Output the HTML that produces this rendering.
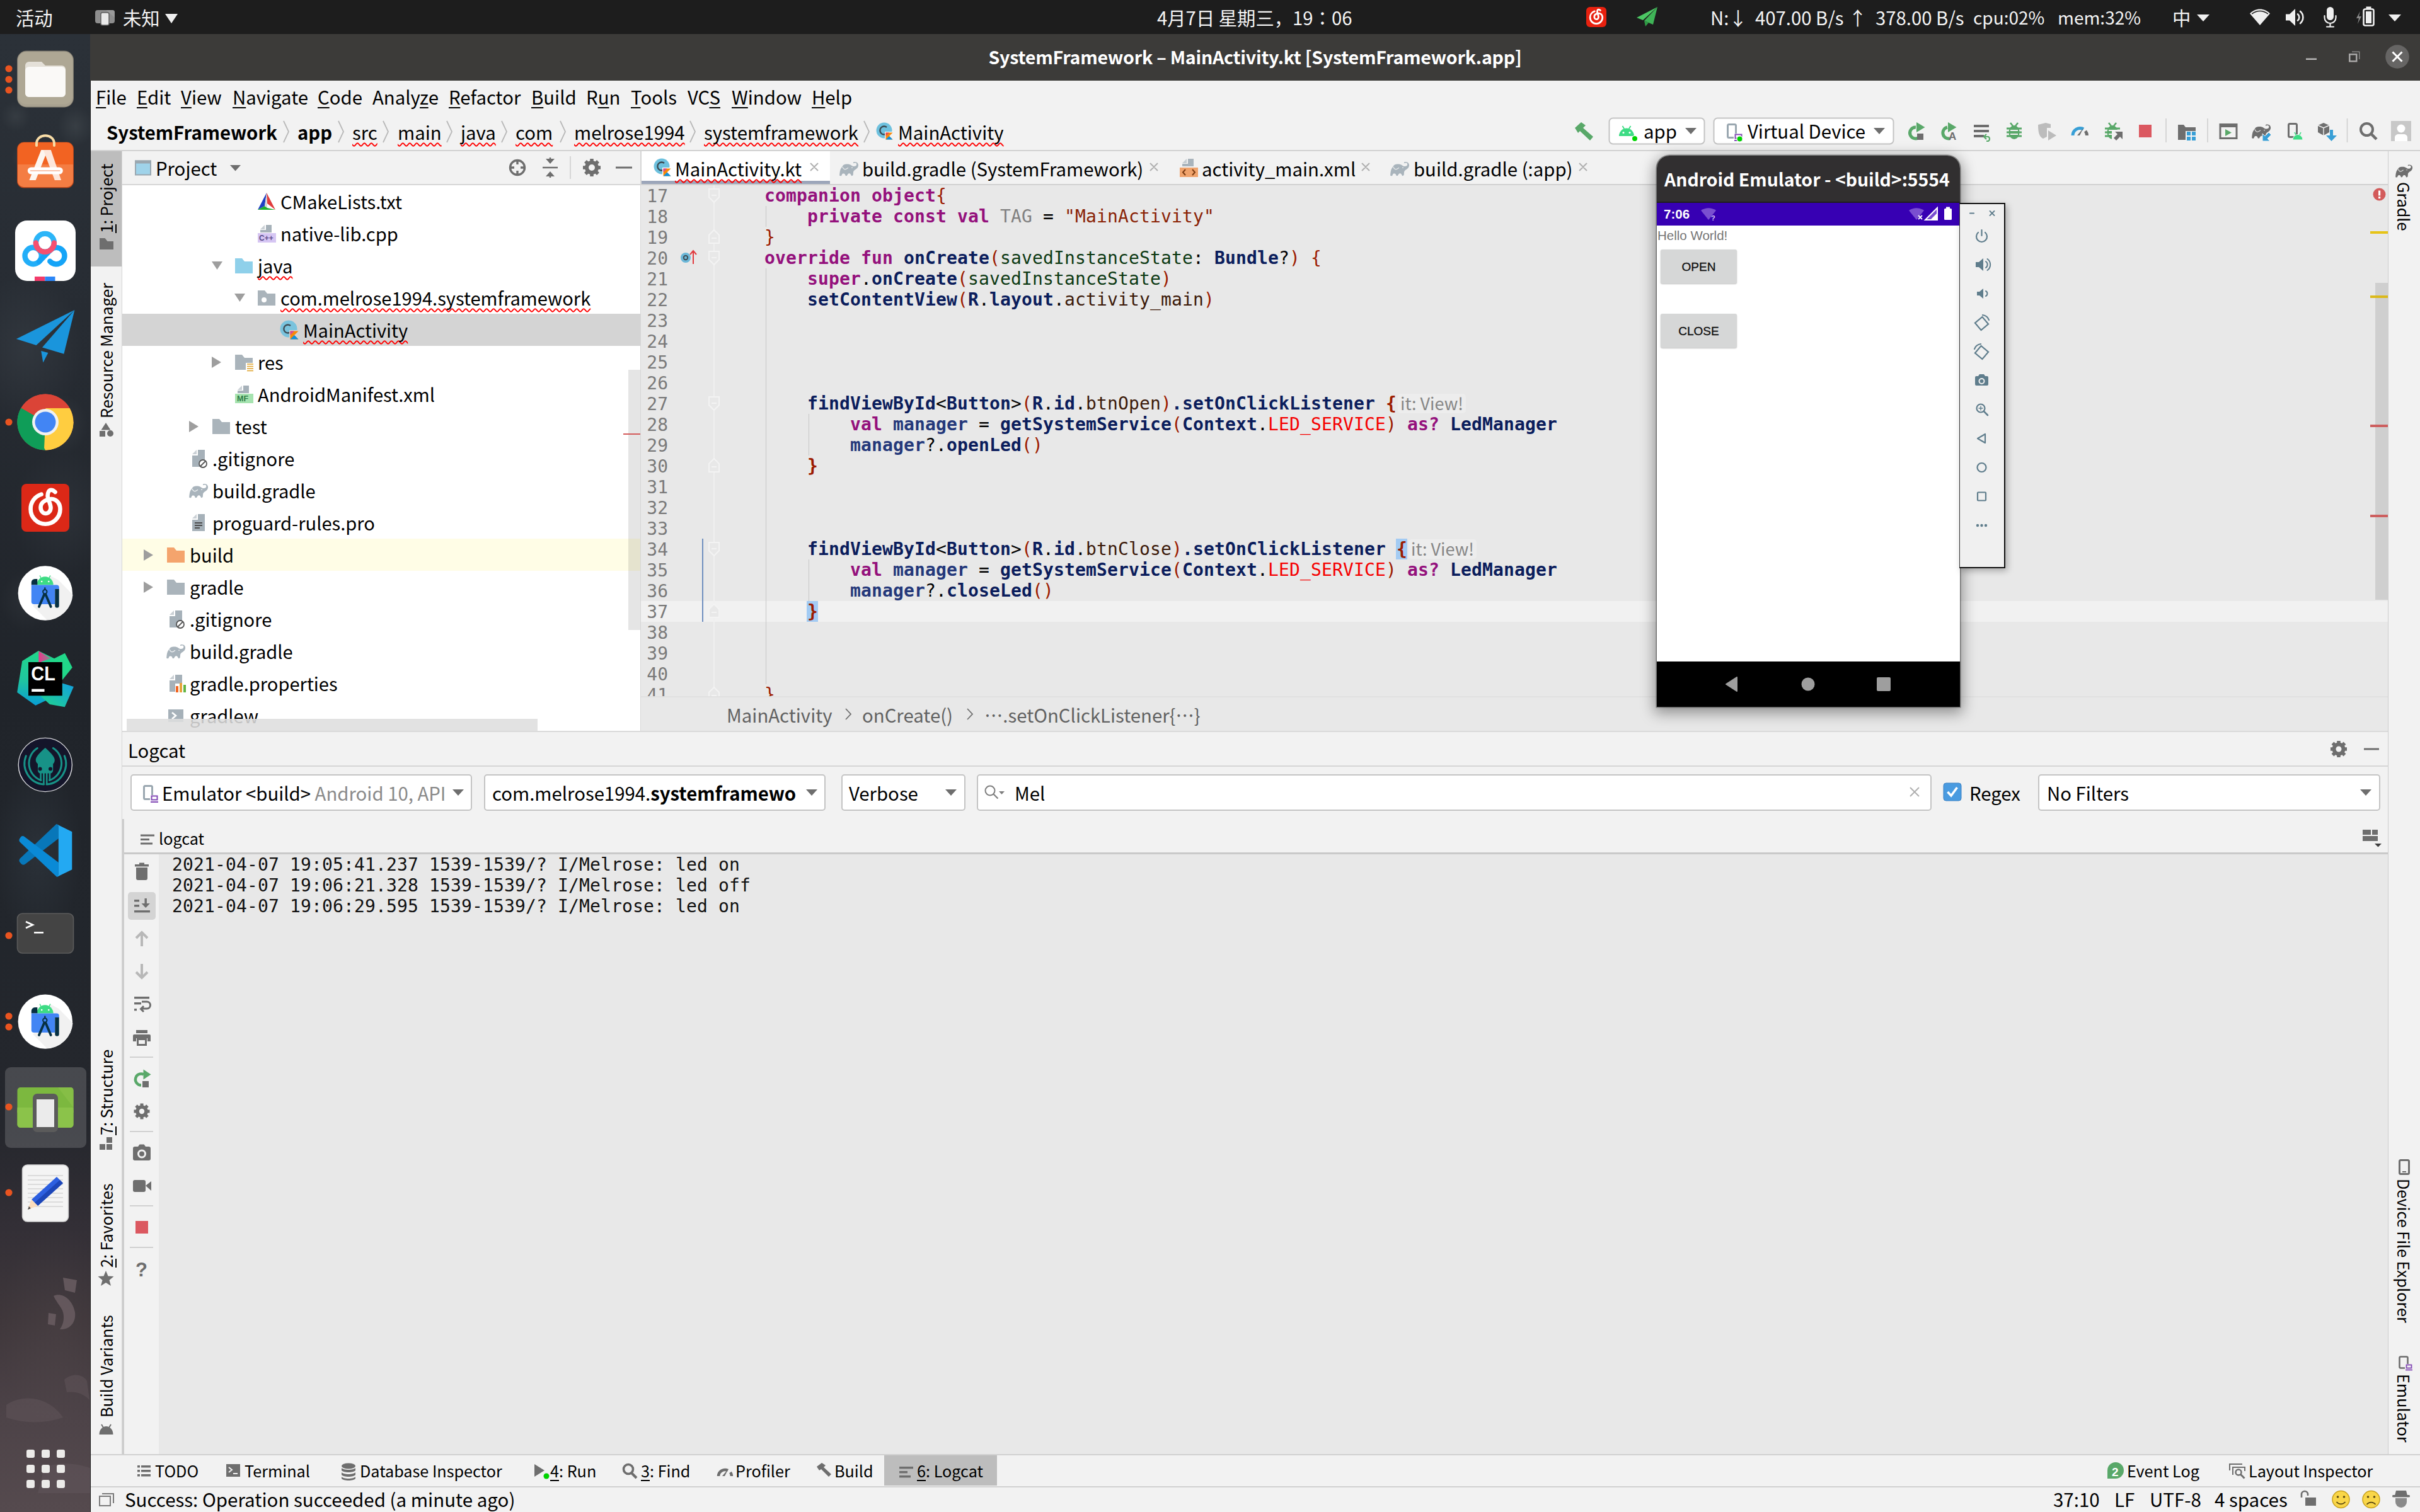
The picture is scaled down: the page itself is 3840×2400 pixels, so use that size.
<!DOCTYPE html>
<html lang="zh">
<head>
<meta charset="utf-8">
<title>SystemFramework – MainActivity.kt [SystemFramework.app]</title>
<style>
*{box-sizing:border-box;margin:0;padding:0}
html,body{width:3840px;height:2400px;overflow:hidden;background:#f2f2f2}
body{position:relative;font-family:"Noto Sans CJK SC","Liberation Sans",sans-serif;font-size:30px;color:#000;line-height:1}
.abs{position:absolute}
.nw{white-space:nowrap}
.ui{font-family:"Noto Sans CJK SC","Liberation Sans",sans-serif}
.mono{font-family:"DejaVu Sans Mono","Liberation Mono",monospace}
u.m{text-decoration:underline;text-decoration-thickness:2px;text-underline-offset:4px}
.sq{text-decoration:underline wavy #f00;text-decoration-thickness:1.500px;text-underline-offset:3.500px;text-decoration-skip-ink:none}
svg{position:absolute;overflow:visible}
/* top bar */
#topbar{left:0;top:0;width:3840px;height:54px;background:#1d1d1d;color:#f4f4f4;font-size:29.33px}
#topbar .t{position:absolute;top:0;height:54px;line-height:54px;white-space:nowrap}
/* dock */
#dock{left:0;top:54px;width:143px;height:2346px;background:linear-gradient(180deg,#2b3138 0%,#272c33 19%,#20242a 44.6%,#22262c 61.6%,#25272d 74%,#332f36 80.8%,#3f373b 87%,#4d4348 93.6%,#554a4e 100%)}
/* title */
#title{left:143px;top:54px;width:3697px;height:74px;background:#3c3b39}
#title .tt{position:absolute;left:0;width:3697px;top:0;height:74px;line-height:72px;text-align:center;color:#fff;font-weight:bold;font-size:28.6px;letter-spacing:-0.25px}
/* ide */
#ide{left:143px;top:128px;width:3697px;height:2272px;background:#f2f2f2}
.hl{position:absolute;background:#d1d1d1;height:2px}
.vl{position:absolute;background:#d1d1d1;width:2px}
.row{position:absolute;left:0;height:51px;line-height:49px;white-space:nowrap;font-size:30px}
.code{position:absolute;left:0;top:0;font-family:"DejaVu Sans Mono","Liberation Mono",monospace;font-size:28px;letter-spacing:0.143px;line-height:33px;white-space:pre}
.k{color:#94117c;font-weight:bold}
.f{color:#0b1d5c;font-weight:bold}
.b{color:#9c1b00}
.bb{color:#9c1b00;font-weight:bold}
.p{color:#0e3a14}
.s{color:#8a2306}
.g{color:#808080}
.v{color:#24387a;font-weight:bold}
.e{color:#f50000}
.n{color:#3c1a0a}
.hint{font-family:"Noto Sans CJK SC","Liberation Sans",sans-serif;font-size:27px;color:#868686;background:#ededed;border-radius:5px;letter-spacing:0;padding:0 4px;margin-left:4px}
.ln{position:absolute;left:0;width:70px;text-align:right;color:#7a7a7a;font-family:"DejaVu Sans Mono","Liberation Mono",monospace;font-size:28px;line-height:33px;height:33px}
.tab{position:absolute;top:0;height:52px;line-height:52px;white-space:nowrap;font-size:30px}

.vt{position:absolute;white-space:nowrap;font-size:25.2px;line-height:50px;height:50px;transform-origin:0 0}
.combo{position:absolute;background:#fff;border:2px solid #c4c4c4;border-radius:5px;white-space:nowrap;overflow:hidden}
.arr{position:absolute;width:0;height:0;border-left:9px solid transparent;border-right:9px solid transparent;border-top:10px solid #6e6e6e}
</style>
</head>
<body>
<div id="topbar" class="abs">
  <div class="t" style="left:25px">活动</div>
  <svg style="left:151px;top:16px" width="31" height="24" viewBox="0 0 31 24"><rect x="0" y="0" width="31" height="21" rx="4" fill="#8e8e8e"/><path d="M17 0h10a4 4 0 0 1 4 4v8z" fill="#9b9b9b"/><rect x="9" y="4" width="13" height="20" rx="2.5" fill="#e9e9e9" stroke="#5e5e5e" stroke-width="1.5"/></svg>
  <div class="t" style="left:195px">未知</div>
  <svg style="left:262px;top:22px" width="20" height="15" viewBox="0 0 20 15"><path d="M0 0h20L10 15z" fill="#f0f0f0"/></svg>
  <div class="t" lang="ja" style="left:1836px;font-family:'Noto Sans CJK JP','Noto Sans CJK SC',sans-serif">4月7日 星期三，19：06</div>
  <svg style="left:2517px;top:11px" width="32" height="32" viewBox="0 0 32 32"><rect width="32" height="32" rx="6" fill="#e8210f"/><path transform="scale(.418) translate(-33.900 -768)" d="M65.600 784.600A24 24 0 0 0 48.600 808.300A23.400 23.400 0 0 0 72 831.700A23.400 23.400 0 0 0 95.500 808.300C95.500 799 90 792.500 82 792C76 791.600 64.500 796 64.500 805C64.500 811 68 815 72.500 815C77 815 80.500 811 80.500 806C80.500 800 75.600 792 75.600 787C75.600 781 78 777.800 81 777.800C84 777.800 86 779.500 87.500 781.100" fill="none" stroke="#fff" stroke-width="6.600" stroke-linecap="round" stroke-linejoin="round"/></svg>
  <svg style="left:2597px;top:11px" width="33" height="31" viewBox="0 0 33 31"><path d="M33 0L0 17l10 4z" fill="#4cc764"/><path d="M33 0L12 22l14 6z" fill="#3fb457"/><path d="M12 22l2 9 5-6z" fill="#2f9a45"/></svg>
  <div class="t" style="left:2714px">N:↓</div>
  <div class="t" style="left:2785px">407.00 B/s</div>
  <div class="t" style="left:2933px">↑</div>
  <div class="t" style="left:2976px">378.00 B/s</div>
  <div class="t" style="left:3131px;font-size:28px">cpu:02%</div>
  <div class="t" style="left:3265px;font-size:28px">mem:32%</div>
  <div class="t" style="left:3447px">中</div>
  <svg style="left:3486px;top:23px" width="20" height="11" viewBox="0 0 20 11"><path d="M0 0h20L10 11z" fill="#f0f0f0"/></svg>
  <svg style="left:3570px;top:14px" width="32" height="27" viewBox="0 0 32 27"><path d="M16 26L0 7.500C4.500 2.800 10 .5 16 .5s11.500 2.300 16 7z" fill="#f0f0f0"/><path d="M3.200 8.200C7 5 11.300 3.500 16 3.500s9 1.500 12.800 4.700" fill="none" stroke="#1d1d1d" stroke-width="1.600"/></svg>
  <svg style="left:3627px;top:13px" width="31" height="29" viewBox="0 0 31 29"><path d="M0 9.500h6l9-8.500v27l-9-8.500H0z" fill="#f0f0f0"/><path d="M19 9.500a6.500 6.500 0 0 1 0 10M23 5a12.500 12.500 0 0 1 0 19" fill="none" stroke="#f0f0f0" stroke-width="2.600" stroke-linecap="round"/></svg>
  <svg style="left:3687px;top:11px" width="21" height="33" viewBox="0 0 21 33"><rect x="5" y="0" width="11" height="21" rx="5.500" fill="#f0f0f0"/><path d="M1.500 14v3a9 9 0 0 0 18 0v-3M10.500 26v5M5 31.500h11" fill="none" stroke="#f0f0f0" stroke-width="2.200" stroke-linecap="round"/></svg>
  <svg style="left:3738px;top:10px" width="31" height="32" viewBox="0 0 31 32"><path d="M7 8L1 19h4l-2 9 6-12H5z" fill="#8a8a8a"/><rect x="12.500" y="4.500" width="16" height="26" rx="2.500" fill="none" stroke="#f0f0f0" stroke-width="2.600"/><rect x="16.500" y="0.500" width="8" height="4" fill="#f0f0f0"/><rect x="16" y="8" width="9" height="19" fill="#f0f0f0"/></svg>
  <svg style="left:3790px;top:23px" width="20" height="11" viewBox="0 0 20 11"><path d="M0 0h20L10 11z" fill="#f0f0f0"/></svg>
</div>
<div id="dock" class="abs"></div>
<div class="abs" style="left:0;top:54px;width:143px;height:2346px;background:radial-gradient(ellipse 90px 120px at 40px 500px,rgba(120,130,140,.13),transparent),radial-gradient(ellipse 80px 100px at 100px 760px,rgba(120,130,140,.10),transparent),radial-gradient(ellipse 70px 140px at 60px 1300px,rgba(90,110,125,.16),transparent),radial-gradient(ellipse 90px 160px at 90px 2050px,rgba(120,105,105,.10),transparent),radial-gradient(ellipse 40px 30px at 50px 196px,rgba(140,150,150,.16),transparent 80%),radial-gradient(ellipse 36px 40px at 120px 146px,rgba(140,150,150,.14),transparent 80%),radial-gradient(ellipse 30px 30px at 25px 131px,rgba(140,150,150,.12),transparent 80%),radial-gradient(ellipse 50px 60px at 100px 620px,rgba(140,150,150,.10),transparent 80%),radial-gradient(ellipse 50px 60px at 40px 900px,rgba(140,150,150,.08),transparent 80%)"></div>
<svg style="left:0;top:2000px" width="143" height="400" viewBox="0 2000 143 400"><g fill="#6a5d62" opacity=".85"><path d="M100 2028l22 4-3 20-16-4z"/><path d="M85 2057c12-6 30 4 34 26 2 16-8 28-24 27 6-8 8-20 4-30-4-8-10-14-14-23z"/><path d="M77 2084l12 2-2 18-11-2z"/></g><g fill="#62565b" opacity=".5"><path d="M102 2190c14-12 30-8 36 2l4 30c-10-10-22-14-36-12z"/><path d="M10 2230c30-20 70-10 90 20-30 10-60 10-90 0z"/><path d="M70 2330c20-10 50-8 73 0v40H60z"/></g></svg>
<!-- dock dots -->
<svg style="left:0;top:54px" width="143" height="2346" viewBox="0 54 143 2346"><rect x="8" y="1694" width="129" height="128" rx="9" fill="#ffffff" fill-opacity=".16"/><g fill="#e95420"><circle cx="14" cy="109" r="5.600"/><circle cx="14" cy="126" r="5.600"/><circle cx="14" cy="143" r="5.600"/><circle cx="14" cy="670" r="5.600"/><circle cx="14" cy="1485" r="5.600"/><circle cx="14" cy="1613" r="5.600"/><circle cx="14" cy="1630" r="5.600"/><circle cx="14" cy="1757" r="5.600"/><circle cx="14" cy="1893" r="5.600"/></g>
<!-- files -->
<rect x="27" y="80.500" width="90" height="90" rx="15" fill="#7d786c"/><rect x="28" y="81.500" width="88" height="88" rx="14" fill="#a8a190"/><rect x="29" y="82.500" width="86" height="83" rx="13" fill="#aea794"/>
<path d="M40 104a6 6 0 0 1 6-6h20l6 6h26a6 6 0 0 1 6 6v38a6 6 0 0 1-6 6H46a6 6 0 0 1-6-6z" fill="#e4e0d8"/><rect x="40" y="106" width="64" height="48" rx="6" fill="#faf9f7"/>
<!-- software -->
<rect x="27" y="225.500" width="90" height="73" rx="11" fill="#b8461c"/>
<rect x="28" y="226" width="88" height="71" rx="10" fill="#f26322"/><rect x="28" y="261" width="88" height="36" rx="10" fill="#f47d43"/><rect x="28" y="261" width="88" height="10" fill="#f47d43"/>
<path d="M58 231v-3c0-17 28-17 28 0v3" fill="none" stroke="#f8dca6" stroke-width="4" stroke-linecap="round"/>
<path d="M46.400 286L65.300 238h10.300L56.700 286z" fill="#fdf6f0"/><path d="M97.100 286L80.800 238h-12L86.800 286z" fill="#fde6da"/>
<rect x="43.800" y="265.400" width="56" height="11.200" rx="5.600" fill="#fff"/><rect x="48" y="270" width="47.500" height="2" fill="#f8c4ad"/>
<!-- baidu -->
<rect x="24" y="350" width="96" height="96" rx="19" fill="#fff"/>
<g fill="none" stroke-width="8.400" stroke-linecap="round"><circle cx="71.400" cy="385.400" r="14.500" stroke="#2bb5f8"/><circle cx="52.700" cy="406" r="13.200" stroke="#22aef8"/><path d="M79.300 414.700A13.200 13.200 0 1 0 80 396.700L62 415.300" stroke="#15a4f7"/><path d="M56.900 385.400a14.500 14.500 0 0 0 29 0" stroke="#f5506f"/></g>
<rect x="55" y="439" width="16.400" height="7" fill="#f23b6a"/><rect x="71.400" y="439" width="16.100" height="7" fill="#2b86f7"/>
<!-- plane -->
<path d="M118.400 492L25.900 538l31.600 10z" fill="#1a95dc"/><path d="M118.400 492L67 551.400l34.400 10.400z" fill="#1a95dc"/><path d="M65.200 557l11.200 3-8 15.500z" fill="#1a95dc"/>
<!-- chrome -->
<circle cx="72" cy="670" r="44.500" fill="#db4437"/>
<path d="M72 670L33.500 647.700A44.500 44.500 0 0 0 72 714.500z" fill="#0f9d58"/><path d="M72 670L33.500 647.700A44.500 44.500 0 0 0 49.700 708.500z" fill="#0f9d58"/>
<path d="M72 670h44.500A44.500 44.500 0 0 1 72 714.500l-2-2z" fill="#ffcd40"/><path d="M72 647.700h38.500A44.500 44.500 0 0 1 72 714.500L91.300 681z" fill="#ffcd40"/>
<path d="M33.500 647.700A44.500 44.500 0 0 1 110.500 647.700H72z" fill="#db4437"/>
<path d="M72 714.500A44.500 44.500 0 0 1 33.500 647.700L52.700 681z" fill="#0f9d58"/>
<circle cx="72" cy="670" r="21" fill="#f1f1f1"/><circle cx="72" cy="670" r="16.500" fill="#4285f4"/>
<!-- netease -->
<rect x="34" y="768" width="76" height="76" rx="8" fill="#dc2817"/>
<path d="M65.600 784.600A24 24 0 0 0 48.600 808.300A23.400 23.400 0 0 0 72 831.700A23.400 23.400 0 0 0 95.500 808.300C95.500 799 90 792.500 82 792C76 791.600 64.500 796 64.500 805C64.500 811 68 815 72.500 815C77 815 80.500 811 80.500 806C80.500 800 75.600 792 75.600 787C75.600 781 78 777.800 81 777.800C84 777.800 86 779.500 87.500 781.100" fill="none" stroke="#fff" stroke-width="6.600" stroke-linecap="round" stroke-linejoin="round"/>
<!-- android studio 1 -->
<g id="as"><circle cx="71.800" cy="941.500" r="43.200" fill="#fff"/><path d="M80 914l13 7 22.500 23a43.200 43.200 0 0 1-41 40l-22-22z" fill="#f1f1f1"/>
<path d="M58.400 928.500a13.100 13.300 0 0 1 26.200 0z" fill="#3ddc84"/><path d="M66 919.500l-2.600-5.500M77 919.500l2.600-5.500" stroke="#3ddc84" stroke-width="1.400" stroke-linecap="round"/><circle cx="66.200" cy="923" r="1.300" fill="#fff"/><circle cx="77.300" cy="923" r="1.300" fill="#fff"/>
<path d="M49.800 928.500v-4a5.500 5.500 0 0 1 5.500-5.500h4v9.500z" fill="#073042"/>
<path d="M49.800 928.500h40a4 4 0 0 1 4 4v3h-6.500v23.500h-33.500a4 4 0 0 1-4-4z" fill="#4285f4"/>
<path d="M87.300 935h6.400v26.500a3.200 3.200 0 0 1-6.400 0z" fill="#073042"/>
<path d="M71.300 941l-9.400 22M71.300 941l9.400 22" stroke="#073042" stroke-width="3.800" stroke-linecap="round"/><circle cx="71.300" cy="939.300" r="3.200" fill="#4285f4" stroke="#073042" stroke-width="2"/><path d="M71.300 932.400v4" stroke="#073042" stroke-width="2.200"/></g>
<!-- clion -->
<defs><linearGradient id="cl1" x1="0" y1="0" x2="0" y2="1"><stop offset="0" stop-color="#21d789"/><stop offset=".55" stop-color="#1fc4a0"/><stop offset="1" stop-color="#089fd6"/></linearGradient><linearGradient id="cl2" x1="0" y1="0" x2="1" y2="0"><stop offset="0" stop-color="#ed358c"/><stop offset="1" stop-color="#7d8f8f"/></linearGradient><linearGradient id="cl3" x1="0" y1="1" x2="1" y2="0"><stop offset="0" stop-color="#21d789"/><stop offset="1" stop-color="#129fe0"/></linearGradient></defs>
<path d="M61 1033L35.200 1049.300 27.200 1099l29.200 20.800L98 1100V1051z" fill="url(#cl1)"/>
<path d="M61.400 1033.500l19.400 11.500-19.400 7z" fill="url(#cl2)"/>
<path d="M76.500 1050L103 1036.800l11.800 22.800-16 19.800z" fill="#21d789"/>
<path d="M98.800 1084.500l18.100 5.500-14.100 32.300-23.800-4.300-14.500-13z" fill="url(#cl3)"/>
<rect x="45" y="1051" width="53.800" height="53.300" fill="#000"/><rect x="50.200" y="1093.600" width="20.300" height="4.400" fill="#fff"/>
<text x="49.300" y="1080.200" font-family="Liberation Sans,sans-serif" font-weight="bold" font-size="30.500" textLength="38.500" lengthAdjust="spacingAndGlyphs" fill="#fff">CL</text>
<!-- gitkraken -->
<circle cx="71.800" cy="1214" r="42.600" fill="#14152a" stroke="#d9d9dc" stroke-width="1.400"/>
<g fill="none" stroke="#179287" stroke-width="3" stroke-linecap="round"><path d="M41.300 1199.800A33 33 0 0 0 69.600 1245"/><path d="M59.300 1187.500A28.500 28.500 0 0 0 65 1238.500"/><path d="M102.300 1199.800A33 33 0 0 1 74 1245"/><path d="M84.300 1187.500A28.500 28.500 0 0 1 78.600 1238.500"/><path d="M64.600 1227v11.500M79 1227v11.500M69.400 1227v18M74.200 1227v18" stroke-linecap="butt" stroke-width="2.600"/></g>
<path d="M71.800 1187C66 1192 57 1200 56.700 1206C56.700 1209 58 1211 60 1212.500V1222C60 1226 62 1227.500 64 1227.500H79.600C82 1227.500 84.200 1226 84.200 1222V1212.500C86 1211 86.800 1209 86.800 1206C86.500 1200 77.500 1192 71.800 1187Z" fill="#179287"/><circle cx="63.600" cy="1220.500" r="3" fill="#14152a"/><circle cx="80" cy="1220.500" r="3" fill="#14152a"/>
<!-- vscode -->
<path d="M89.400 1308.100L92.800 1309.500V1331L39.500 1372Q36 1374 33.500 1371L31 1368Q29.500 1365 32 1362.500Z" fill="#0877b9"/>
<path d="M38.700 1327.900Q35.500 1326 33 1328.500L31 1331.500Q29.500 1334.500 32 1337L90.200 1392L92.800 1391V1369Z" fill="#0a8ad6"/>
<path d="M89.400 1308.100L114.300 1320.200V1380.300L90.200 1392Q92.800 1391 92.800 1388V1312Q92.800 1309 89.400 1308.100Z" fill="#23a9f2"/>
<!-- terminal -->
<rect x="27.500" y="1450" width="89" height="63" rx="8" fill="#444" stroke="#5b5b5b" stroke-width="1.600"/>
<path d="M41 1463l11 5-11 5" fill="none" stroke="#fff" stroke-width="2.600"/><rect x="54" y="1479" width="15" height="2.600" fill="#fff"/>
<!-- android studio 2 -->
<g transform="translate(0 680.100)"><circle cx="71.800" cy="941.500" r="43.200" fill="#fff"/><path d="M80 914l13 7 22.500 23a43.200 43.200 0 0 1-41 40l-22-22z" fill="#f1f1f1"/>
<path d="M58.400 928.500a13.100 13.300 0 0 1 26.200 0z" fill="#3ddc84"/><path d="M66 919.500l-2.600-5.500M77 919.500l2.600-5.500" stroke="#3ddc84" stroke-width="1.400" stroke-linecap="round"/><circle cx="66.200" cy="923" r="1.300" fill="#fff"/><circle cx="77.300" cy="923" r="1.300" fill="#fff"/>
<path d="M49.800 928.500v-4a5.500 5.500 0 0 1 5.500-5.500h4v9.500z" fill="#073042"/>
<path d="M49.800 928.500h40a4 4 0 0 1 4 4v3h-6.500v23.500h-33.500a4 4 0 0 1-4-4z" fill="#4285f4"/>
<path d="M87.300 935h6.400v26.500a3.200 3.200 0 0 1-6.400 0z" fill="#073042"/>
<path d="M71.300 941l-9.400 22M71.300 941l9.400 22" stroke="#073042" stroke-width="3.800" stroke-linecap="round"/><circle cx="71.300" cy="939.300" r="3.200" fill="#4285f4" stroke="#073042" stroke-width="2"/><path d="M71.300 932.400v4" stroke="#073042" stroke-width="2.200"/></g>
<!-- emulator (selected) -->

<rect x="27.500" y="1726" width="89" height="64" rx="5" fill="#7cb83f"/><rect x="27.500" y="1758" width="89" height="32" rx="5" fill="#8bc34a"/><rect x="27.500" y="1758" width="89" height="8" fill="#8bc34a"/><path d="M92 1726h20a4.500 4.500 0 0 1 4.500 4.500V1758z" fill="#86be46"/>
<rect x="52" y="1736" width="40" height="61" rx="7" fill="#5b5b5b"/><rect x="58" y="1745" width="28" height="44" fill="#ebebeb"/>
<!-- text editor -->
<rect x="35.500" y="1849" width="73" height="90" rx="8" fill="#f4f4f4" stroke="#cfcfcf" stroke-width="1.500"/>
<g stroke="#d4d4d4" stroke-width="1.400"><path d="M44 1866h56M44 1873h56M44 1880h56M44 1887h56M44 1894h56M44 1901h56M44 1908h56M44 1915h56"/></g>
<path d="M90 1868l10 10-40 36-10-10z" fill="#2c5fe0"/><path d="M95 1873l5 5-40 36-5-5z" fill="#1c46b8"/><path d="M50 1904l10 10-16 6z" fill="#fbdcbc"/><path d="M46 1915l3 3-5 2z" fill="#444"/>
<!-- grid -->
<g fill="#ecebe9"><rect x="42" y="2301" width="13" height="13" rx="3"/><rect x="66" y="2301" width="13" height="13" rx="3"/><rect x="90" y="2301" width="13" height="13" rx="3"/><rect x="42" y="2325" width="13" height="13" rx="3"/><rect x="66" y="2325" width="13" height="13" rx="3"/><rect x="90" y="2325" width="13" height="13" rx="3"/><rect x="42" y="2349" width="13" height="13" rx="3"/><rect x="66" y="2349" width="13" height="13" rx="3"/><rect x="90" y="2349" width="13" height="13" rx="3"/></g>
</svg>
<div id="title" class="abs">
  <div class="tt">SystemFramework – MainActivity.kt [SystemFramework.app]</div>
  <svg style="left:3516px;top:38px" width="18" height="4" viewBox="0 0 18 4"><rect width="17" height="2.500" y=".5" fill="#b9b8b7"/></svg>
  <svg style="left:3584px;top:27px" width="18" height="18" viewBox="0 0 18 18"><rect x="1.250" y="5.250" width="11" height="11" fill="none" stroke="#a9a8a7" stroke-width="2.500"/><path d="M5 1.250h11.750V13" fill="none" stroke="#a9a8a7" stroke-width="1.500" opacity=".7"/></svg>
  <svg style="left:3642px;top:17px" width="38" height="38" viewBox="0 0 38 38"><circle cx="19" cy="19" r="18.800" fill="#666564"/><path d="M11.500 11.500l15 15M26.500 11.500l-15 15" stroke="#fff" stroke-width="3"/></svg>
</div>
<div id="ide" class="abs"></div>
<div id="wb" class="abs" style="left:143px;top:128px;width:1px;height:2272px;background:#1c1c1c;z-index:5"></div>
<!-- menu bar : coordinates absolute to page -->
<div class="abs nw" style="left:0;top:128px;height:52px;line-height:50px;font-size:29.33px">
<span class="abs" style="left:152px"><u class="m">F</u>ile</span>
<span class="abs" style="left:217px"><u class="m">E</u>dit</span>
<span class="abs" style="left:287px"><u class="m">V</u>iew</span>
<span class="abs" style="left:369px"><u class="m">N</u>avigate</span>
<span class="abs" style="left:504px"><u class="m">C</u>ode</span>
<span class="abs" style="left:591px">Analy<u class="m">z</u>e</span>
<span class="abs" style="left:712px"><u class="m">R</u>efactor</span>
<span class="abs" style="left:843px"><u class="m">B</u>uild</span>
<span class="abs" style="left:930px">R<u class="m">u</u>n</span>
<span class="abs" style="left:1001px"><u class="m">T</u>ools</span>
<span class="abs" style="left:1091px">VC<u class="m">S</u></span>
<span class="abs" style="left:1161px"><u class="m">W</u>indow</span>
<span class="abs" style="left:1288px"><u class="m">H</u>elp</span>
</div>
<!-- nav bar -->
<div class="abs nw" style="left:0;top:180px;height:58px;line-height:58px;font-size:29.33px">
<b class="abs" style="left:169px">SystemFramework</b>
<b class="abs" style="left:472px">app</b>
<span class="abs sq" style="left:559px">src</span>
<span class="abs sq" style="left:631px">main</span>
<span class="abs sq" style="left:731px">java</span>
<span class="abs sq" style="left:818px">com</span>
<span class="abs sq" style="left:911px">melrose1994</span>
<span class="abs sq" style="left:1117px">systemframework</span>
<span class="abs sq" style="left:1425px">MainActivity</span>
</div>
<svg style="left:0;top:180px" width="1500" height="58" viewBox="0 180 1500 58"><g fill="none" stroke="#b8b8b8" stroke-width="1.800"><path d="M450 192l8 17-8 17M537 192l8 17-8 17M608 192l8 17-8 17M709 192l8 17-8 17M796 192l8 17-8 17M889 192l8 17-8 17M1095 192l8 17-8 17M1371 192l8 17-8 17"/></g>
<g id="ktc"><circle cx="1403" cy="207" r="12.500" fill="#6ec1de"/><path d="M1407 202a6.500 6.500 0 1 0 0 10" fill="none" stroke="#3b4a52" stroke-width="2.400"/><path d="M1404 209h13v13h-13z" fill="#f2f2f2"/><path d="M1405.500 210.500h11l-5.500 5.500 5.500 5.500h-11z" fill="#f88909"/><path d="M1405.500 210.500h5.500l-5.500 5.500z" fill="#e44857"/><path d="M1405.500 221.500l5.500-5.500 5.500 5.500z" fill="#0d91e1"/></g>
</svg>
<div class="hl" style="left:143px;top:238px;width:3697px"></div>
<!-- toolbar -->
<svg style="left:2480px;top:180px" width="1360" height="60" viewBox="2480 180 1360 60">
<!-- hammer -->
<g transform="translate(2498 194)"><path d="M1 9L11 0l7 5-4 4 16 14-5 6L9 14l-3 3z" fill="#59a869"/></g>
<!-- combos -->
<rect x="2553.500" y="187.500" width="151" height="41" rx="6" fill="#fff" stroke="#c4c4c4" stroke-width="2"/>
<rect x="2719.500" y="187.500" width="285" height="41" rx="6" fill="#fff" stroke="#c4c4c4" stroke-width="2"/>
<path d="M2674 203h18l-9 10zM2973 203h18l-9 10z" fill="#6e6e6e"/>
<!-- android head -->
<g transform="translate(2569 199)"><path d="M0 17a12 12.500 0 0 1 24 0z" fill="#3ddc84"/><path d="M5.500 1l3 5M18.500 1l-3 5" stroke="#3ddc84" stroke-width="1.800"/><circle cx="7" cy="11.500" r="1.500" fill="#fff"/><circle cx="17" cy="11.500" r="1.500" fill="#fff"/><circle cx="25" cy="21" r="4.600" fill="#00d300" stroke="#fff" stroke-width="1.200"/></g>
<!-- device icon -->
<g transform="translate(2740 196)"><rect x="1.500" y="1.500" width="13" height="21" rx="2" fill="none" stroke="#9aa7b0" stroke-width="3"/><rect x="11" y="16" width="13" height="10" fill="#fff"/><rect x="13.500" y="17.500" width="10" height="6" fill="none" stroke="#834ab5" stroke-width="2"/><path d="M12 27h13" stroke="#834ab5" stroke-width="2"/><circle cx="20.500" cy="24.500" r="4.600" fill="#00d300" stroke="#fff" stroke-width="1.200"/></g>
<!-- rerun -->
<g id="rr" transform="translate(3028 194)"><path d="M12 8A9 9 0 1 0 18.400 22.800" fill="none" stroke="#59a869" stroke-width="5"/><path d="M13 0l13.500 8-13.500 8z" fill="#59a869"/></g><rect x="3042" y="212" width="10" height="10" fill="#6e6e6e"/>
<g transform="translate(3078 194)"><path d="M12 8A9 9 0 1 0 16 25.800" fill="none" stroke="#59a869" stroke-width="5"/><path d="M13 0l13.500 8-13.500 8z" fill="#59a869"/></g>
<text x="3092" y="222" font-family="Liberation Sans,sans-serif" font-weight="bold" font-size="17" fill="#6e6e6e">A</text>
<!-- lines -->
<g fill="#6e6e6e"><rect x="3132" y="198" width="24" height="4"/><rect x="3132" y="206" width="24" height="4"/><rect x="3132" y="214" width="16" height="4"/></g><path d="M3152 213l-4 4 4 4M3148 217h7a4 4 0 0 1 0 7h-3" fill="none" stroke="#59a869" stroke-width="2.200"/>
<!-- bug -->
<g id="bug" transform="translate(3184 194)"><ellipse cx="12" cy="16" rx="8.500" ry="11" fill="#59a869"/><path d="M6 1l4 5M18 1l-4 5" stroke="#59a869" stroke-width="2.600"/><path d="M0 10h24M0 16h24M0 22h24" stroke="#59a869" stroke-width="2.800"/><path d="M6 13h12M6 19h12" stroke="#f2f2f2" stroke-width="2.200"/></g>
<!-- coverage -->
<path d="M3234 198l12-3 8 2v6h-6v14l-6 3c-6-3-8-9-8-22z" fill="#bcbcbc"/><path d="M3250 207l13 8-13 8z" fill="#bcbcbc"/>
<!-- profiler -->
<path d="M3289 215a11.500 11.500 0 0 1 17-10" fill="none" stroke="#389fd6" stroke-width="5"/><path d="M3309 208a11.500 11.500 0 0 1 2.500 7" fill="none" stroke="#6e6e6e" stroke-width="5"/><path d="M3306 203l-6 12h-4z" fill="#6e6e6e"/>
<!-- bug arrow -->
<g transform="translate(3340 194)"><ellipse cx="12" cy="16" rx="8.500" ry="11" fill="#59a869"/><path d="M6 1l4 5M18 1l-4 5" stroke="#59a869" stroke-width="2.600"/><path d="M0 10h24M0 16h24M0 22h24" stroke="#59a869" stroke-width="2.800"/><path d="M6 13h12M6 19h12" stroke="#f2f2f2" stroke-width="2.200"/><path d="M11 12h18v17H11z" fill="#f2f2f2"/><path d="M16 15h12v12l-4-4-6 6-4-4 6-6z" fill="#6e6e6e"/></g>
<!-- stop -->
<rect x="3394" y="198" width="20" height="20" fill="#db5860"/>
<path d="M3437 188v38M3503 188v38M3724.500 188v38" stroke="#cdcdcd" stroke-width="1.500"/>
<!-- folder grid -->
<path d="M3456 198h9l3 4h16v20h-28z" fill="#6e6e6e"/><path d="M3468 208h17v15h-17z" fill="#f2f2f2"/><g fill="#389fd6"><rect x="3470" y="209" width="6" height="6"/><rect x="3478" y="209" width="6" height="6"/><rect x="3470" y="217" width="6" height="6"/><rect x="3478" y="217" width="6" height="6"/></g>
<!-- run window -->
<rect x="3523" y="197.500" width="26" height="22" fill="none" stroke="#6e6e6e" stroke-width="3"/><rect x="3522" y="196" width="28" height="6" fill="#6e6e6e"/><path d="M3531 205l10 5.500-10 5.500z" fill="#59a869"/>
<!-- gradle sync -->
<g transform="translate(3573 197.5)"><path d="M0.200 21.600C0.400 17 1 14 1.800 11.800C2.800 9.500 4 8 5 7C5.400 6 5.800 5.300 6.300 4.900C8 3.900 10.500 3.600 12.900 3.600C15 3.600 16.800 4.200 18.200 4.900C20 5.800 21.800 7.300 23.500 7C25.200 6.700 26.600 6.200 27 5.200C27.400 4.200 27.500 3.400 27.200 2.800C26.800 2 25.800 1.500 24.800 1.500C23.800 1.500 22.800 1.800 21.900 2.200L22.200 0.400C23 0.100 24 0 24.800 0C26.500 0 28 0.800 28.800 1.800C29.600 2.800 30.100 3.800 30.100 4.900C30.100 6.500 29.600 8 28.800 9.200C27.800 10.600 26.200 11.600 24.800 12.600C23.600 13.500 22.600 14.500 22.200 15.800C21.900 17 22 18.500 21.900 19.700C21.800 20.500 21.600 21.200 21.100 21.600C20.600 22 19.800 22.200 19.300 22.100C18.700 21.500 18.400 20.500 18 19.700C17.500 18.800 16.600 18.200 15.600 18.200C14.600 18.200 13.700 18.800 13.200 19.700C12.700 20.600 12.200 21.600 11.600 22C11.100 22.200 10.500 22.200 10 22C9.500 21.500 9.400 20.500 9 19.700C8.500 18.900 7.400 18.400 6.300 18.400C5.300 18.400 4.600 18.900 4.200 19.700C3.800 20.500 3.600 21.400 3.200 21.900C2.500 22.300 1.500 22.300 0.800 22.100Z" fill="#6e6e6e"/><path d="M5 8.100C6 10.500 7.200 11.800 8.700 11.800C10.500 11.800 12.500 10.500 14 9.200" fill="none" stroke="#f2f2f2" stroke-opacity=".8" stroke-width="1.300"/><circle cx="20.100" cy="9.200" r=".9" fill="#f2f2f2" fill-opacity=".8"/></g><path d="M3590 224v-12l4 4 6-6 4 4-6 6 4 4z" fill="#389fd6" stroke="#f2f2f2" stroke-width="1"/>
<!-- device android -->
<g transform="translate(3630 195)"><rect x="1.500" y="1.500" width="13" height="21" rx="2" fill="none" stroke="#6e6e6e" stroke-width="3"/><path d="M8 27a8 8.500 0 0 1 16 0z" fill="#3ddc84" stroke="#f2f2f2" stroke-width="1"/><path d="M11 15l2 4M21 15l-2 4" stroke="#3ddc84" stroke-width="1.600"/></g>
<!-- cube -->
<g transform="translate(3678 195)"><path d="M9 0l9 4v11l-9 5-9-5V4z" fill="#6e6e6e"/><path d="M0 4l9 4 9-4M9 8v12" stroke="#f2f2f2" stroke-width="1.400" fill="none"/><path d="M19 11h5v9h6l-8.500 9-8.500-9h6z" fill="#389fd6"/></g>
<!-- search -->
<circle cx="3755.500" cy="205.500" r="9.500" fill="none" stroke="#6e6e6e" stroke-width="4"/><path d="M3762 212l9 9" stroke="#6e6e6e" stroke-width="4.500"/>
<!-- avatar -->
<rect x="3794" y="192" width="32" height="32" fill="#c8c8c8"/><circle cx="3810" cy="204" r="6.500" fill="#fff"/><path d="M3800 224v-6c0-3 3-5 6-5h8c3 0 6 2 6 5v6z" fill="#fff"/>
</svg>
<div class="abs nw" style="left:2608px;top:186px;height:44px;line-height:42px;font-size:29.33px">app</div>
<div class="abs nw" style="left:2773px;top:186px;height:44px;line-height:42px;font-size:29.33px">Virtual Device</div>
<!-- left strip -->
<div class="abs" style="left:143px;top:240px;width:50px;height:183px;background:#bdbdbd"></div>
<div class="vl" style="left:192.500px;top:240px;height:2068px;background:#d6d6d6;width:1.500px"></div>
<div class="vt" style="left:143px;top:423px;width:183px;transform:rotate(-90deg)"><span class="abs" style="left:53px"><u class="m">1</u>: Project</span></div>
<div class="vt" style="left:143px;top:700px;width:270px;transform:rotate(-90deg)"><span class="abs" style="left:36px">Resource Manager</span></div>
<div class="vt" style="left:143px;top:1838px;width:180px;transform:rotate(-90deg)"><span class="abs" style="left:36px"><u class="m">7</u>: Structure</span></div>
<div class="vt" style="left:143px;top:2050px;width:180px;transform:rotate(-90deg)"><span class="abs" style="left:38px"><u class="m">2</u>: Favorites</span></div>
<div class="vt" style="left:143px;top:2290px;width:200px;transform:rotate(-90deg)"><span class="abs" style="left:40px">Build Variants</span></div>
<svg style="left:143px;top:240px" width="50" height="2068" viewBox="143 240 50 2068">
<path d="M158 378h8.500l4 5h9.500v13h-22z" fill="#6e6e6e"/>
<path d="M168 671l7.500 11.500h-15z" fill="#6e6e6e"/><rect x="158" y="684" width="9" height="9" fill="#6e6e6e"/><circle cx="175" cy="688" r="5" fill="#6e6e6e"/>
<g fill="#6e6e6e"><rect x="158" y="1816" width="9" height="9"/><rect x="169" y="1816" width="9" height="9"/><rect x="169" y="1805" width="9" height="9"/></g>
<path d="M168 2017l3.500 8.500 9 .5-7 6 2.500 9-8-5-8 5 2.500-9-7-6 9-.5z" fill="#6e6e6e"/>
<path d="M157.500 2277a11 13 0 0 1 22 0z" fill="#6e6e6e"/><path d="M161 2261l3 5M176 2261l-3 5" stroke="#6e6e6e" stroke-width="2"/>
</svg>
<!-- project panel -->
<div class="abs" style="left:194px;top:294px;width:823px;height:867px;background:#fff;overflow:hidden" id="tree">
  <div class="abs" style="left:0;top:204px;width:823px;height:51px;background:#d4d4d4"></div>
  <div class="abs" style="left:0;top:561px;width:823px;height:51px;background:#fffde6"></div>
</div>
<div class="hl" style="left:194px;top:292px;width:823px;background:#d6d6d6"></div>
<div class="abs nw" style="left:247px;top:240px;height:52px;line-height:52px;font-size:29.33px">Project</div>
<svg style="left:194px;top:240px" width="823" height="921" viewBox="194 240 823 921">
<!-- header icons -->
<rect x="215" y="255.500" width="24" height="22" fill="#9fd3ea" stroke="#9aa7b0" stroke-width="2"/><rect x="214" y="254.500" width="26" height="5" fill="#9aa7b0"/>
<path d="M365 262h17l-8.500 9.500z" fill="#6e6e6e"/>
<circle cx="821" cy="266" r="11.500" fill="none" stroke="#6e6e6e" stroke-width="3.400"/><path d="M821 253v8M821 271v8M808 266h8M826 266h8" stroke="#6e6e6e" stroke-width="3.400"/>
<path d="M861 266h24" stroke="#6e6e6e" stroke-width="2.500"/><path d="M866 252l7 8 7-8zM866 280l7-8 7 8z" fill="#6e6e6e"/><path d="M873 250v6M873 282v-6" stroke="#6e6e6e" stroke-width="2.500"/>
<path d="M905 248v36" stroke="#d6d6d6" stroke-width="2"/>
<g id="gear" transform="translate(939 266)"><circle r="8" fill="none" stroke="#6e6e6e" stroke-width="6"/><g stroke="#6e6e6e" stroke-width="5.500"><path d="M0-14v5M0 14v-5M-14 0h5M14 0h-5M-10-10l3.500 3.500M10 10l-3.500-3.500M-10 10l3.500-3.500M10-10l-3.500 3.500"/></g></g>
<path d="M977 266h26" stroke="#6e6e6e" stroke-width="3"/>
</svg>
<!-- tree rows -->
<div class="row" style="left:445px;top:295px;font-size:29.1px"><span>CMakeLists.txt</span></div>
<div class="row" style="left:445px;top:346px;font-size:29.1px"><span>native-lib.cpp</span></div>
<div class="row" style="left:409px;top:397px;font-size:29.1px"><span class="sq">java</span></div>
<div class="row" style="left:445px;top:448px;font-size:29.1px"><span class="sq">com.melrose1994.systemframework</span></div>
<div class="row" style="left:481px;top:499px;font-size:29.1px"><span class="sq">MainActivity</span></div>
<div class="row" style="left:409px;top:550px;font-size:29.1px"><span>res</span></div>
<div class="row" style="left:409px;top:601px;font-size:29.1px"><span>AndroidManifest.xml</span></div>
<div class="row" style="left:373px;top:652px;font-size:29.1px"><span>test</span></div>
<div class="row" style="left:337px;top:703px;font-size:29.1px"><span>.gitignore</span></div>
<div class="row" style="left:337px;top:754px;font-size:29.1px"><span>build.gradle</span></div>
<div class="row" style="left:337px;top:805px;font-size:29.1px"><span>proguard-rules.pro</span></div>
<div class="row" style="left:301px;top:856px;font-size:29.1px"><span>build</span></div>
<div class="row" style="left:301px;top:907px;font-size:29.1px"><span>gradle</span></div>
<div class="row" style="left:301px;top:958px;font-size:29.1px"><span>.gitignore</span></div>
<div class="row" style="left:301px;top:1009px;font-size:29.1px"><span>build.gradle</span></div>
<div class="row" style="left:301px;top:1060px;font-size:29.1px"><span>gradle.properties</span></div>
<div class="row" style="left:301px;top:1111px;font-size:29.1px"><span>gradlew</span></div>
<svg style="left:194px;top:294px" width="823" height="867" viewBox="194 294 823 867"><path d="M423 306L409 333l11-6z" fill="#1f3fc4"/><path d="M423 306l14 27-13-10z" fill="#e03d3d"/><path d="M409 333l11-6 4 3 13 3z" fill="#1fb02f"/><path d="M423 306l1 24-4-3z" fill="#d6d6d6"/><path d="M422 357h9v12h-18v-4h9z" fill="#a6b1b9"/><path d="M413 364l7-7v7z" fill="#a6b1b9" opacity=".6"/><rect x="409" y="370" width="29" height="15" fill="#d6c6f3"/><text x="411" y="382" font-family="Liberation Sans,sans-serif" font-weight="bold" font-size="12" fill="#5b4b8a">C++</text><path d="M373 410h11l4 5h13v19h-28z" fill="#8fd0ea"/><path d="M336 415h17l-8.500 13z" fill="#9e9e9e"/><path d="M409 461h11l4 5h13v19h-28z" fill="#aab4bb"/><circle cx="419" cy="476" r="4" fill="#fff"/><path d="M372 466h17l-8.500 13z" fill="#9e9e9e"/><circle cx="458" cy="522" r="13.500" fill="#7ac3dd"/><path d="M461 517a6.500 6.500 0 1 0 0 10" fill="none" stroke="#3f4d55" stroke-width="2.400"/><rect x="459" y="524" width="16" height="16" fill="#d4d4d4"/><path d="M460.5 525.5h13l-6.500 6.500 6.500 6.500h-13z" fill="#f88909"/><path d="M460.5 525.5h6.500l-6.500 6.500z" fill="#d6479b"/><path d="M460.5 538.5l6.500-6.500 6.500 6.500z" fill="#0d91e1"/><path d="M373 563h11l4 5h13v19h-28z" fill="#aab4bb"/><rect x="390" y="576" width="13" height="13" fill="#fff"/><path d="M392 578h10M392 581.5h10M392 585h10M392 588.5h10" stroke="#e0a22b" stroke-width="1.600"/><path d="M336 566l15 9-15 9z" fill="#9e9e9e"/><path d="M386 612h9v12h-18v-4h9z" fill="#a6b1b9"/><path d="M377 619l7-7v7z" fill="#a6b1b9" opacity=".6"/><rect x="373" y="625" width="29" height="15" fill="#a6e3b0"/><text x="376" y="637" font-family="Liberation Sans,sans-serif" font-weight="bold" font-size="12.500" fill="#2f7d45">MF</text><path d="M337 665h11l4 5h13v19h-28z" fill="#aab4bb"/><path d="M300 668l15 9-15 9z" fill="#9e9e9e"/><path d="M314 714h11v16h-6v11h-14v-18h9z" fill="#a6b1b9"/><path d="M305 721l7-7v7z" fill="#a6b1b9" opacity=".6"/><circle cx="322" cy="736" r="6" fill="#fff" stroke="#555" stroke-width="1.800"/><path d="M318 740l8-8" stroke="#555" stroke-width="1.800"/><g transform="translate(300 768)"><path d="M0.200 21.600C0.400 17 1 14 1.800 11.800C2.800 9.500 4 8 5 7C5.400 6 5.800 5.300 6.300 4.900C8 3.900 10.500 3.600 12.900 3.600C15 3.600 16.800 4.200 18.200 4.900C20 5.800 21.800 7.300 23.500 7C25.200 6.700 26.600 6.200 27 5.200C27.400 4.200 27.500 3.400 27.200 2.800C26.800 2 25.800 1.500 24.800 1.500C23.800 1.500 22.800 1.800 21.900 2.200L22.200 0.400C23 0.100 24 0 24.800 0C26.500 0 28 0.800 28.800 1.800C29.600 2.800 30.100 3.800 30.100 4.900C30.100 6.500 29.600 8 28.800 9.200C27.800 10.600 26.200 11.600 24.800 12.600C23.600 13.500 22.600 14.500 22.200 15.800C21.900 17 22 18.500 21.900 19.700C21.800 20.500 21.600 21.200 21.100 21.600C20.600 22 19.800 22.200 19.300 22.100C18.700 21.500 18.400 20.500 18 19.700C17.500 18.800 16.600 18.200 15.600 18.200C14.600 18.200 13.700 18.800 13.200 19.700C12.700 20.600 12.200 21.600 11.600 22C11.100 22.200 10.500 22.200 10 22C9.500 21.500 9.400 20.500 9 19.700C8.500 18.900 7.400 18.400 6.300 18.400C5.300 18.400 4.600 18.900 4.200 19.700C3.800 20.500 3.600 21.400 3.200 21.900C2.500 22.300 1.500 22.300 0.800 22.100Z" fill="#a9b4bc"/><path d="M5 8.100C6 10.500 7.200 11.800 8.700 11.800C10.500 11.800 12.500 10.500 14 9.200" fill="none" stroke="#fff" stroke-opacity=".8" stroke-width="1.300"/><circle cx="20.100" cy="9.200" r=".9" fill="#fff" fill-opacity=".8"/></g><path d="M314 816h11v27h-20v-18h9z" fill="#a6b1b9"/><path d="M305 823l7-7v7z" fill="#a6b1b9" opacity=".6"/><path d="M309 830h12M309 834h12M309 838h8" stroke="#4d4d4d" stroke-width="1.800"/><path d="M265 869h11l4 5h13v19h-28z" fill="#f4a46d"/><path d="M228 872l15 9-15 9z" fill="#9e9e9e"/><path d="M265 920h11l4 5h13v19h-28z" fill="#aab4bb"/><path d="M228 923l15 9-15 9z" fill="#9e9e9e"/><path d="M278 969h11v16h-6v11h-14v-18h9z" fill="#a6b1b9"/><path d="M269 976l7-7v7z" fill="#a6b1b9" opacity=".6"/><circle cx="286" cy="991" r="6" fill="#fff" stroke="#555" stroke-width="1.800"/><path d="M282 995l8-8" stroke="#555" stroke-width="1.800"/><g transform="translate(264 1023)"><path d="M0.200 21.600C0.400 17 1 14 1.800 11.800C2.800 9.500 4 8 5 7C5.400 6 5.800 5.300 6.300 4.900C8 3.900 10.500 3.600 12.900 3.600C15 3.600 16.800 4.200 18.200 4.900C20 5.800 21.800 7.300 23.500 7C25.200 6.700 26.600 6.200 27 5.200C27.400 4.200 27.500 3.400 27.200 2.800C26.800 2 25.800 1.500 24.800 1.500C23.800 1.500 22.800 1.800 21.900 2.200L22.200 0.400C23 0.100 24 0 24.800 0C26.500 0 28 0.800 28.800 1.800C29.600 2.800 30.100 3.800 30.100 4.900C30.100 6.500 29.600 8 28.800 9.200C27.800 10.600 26.200 11.600 24.800 12.600C23.600 13.500 22.600 14.500 22.200 15.800C21.900 17 22 18.500 21.900 19.700C21.800 20.500 21.600 21.200 21.100 21.600C20.600 22 19.800 22.200 19.300 22.100C18.700 21.500 18.400 20.500 18 19.700C17.500 18.800 16.600 18.200 15.600 18.200C14.600 18.200 13.700 18.800 13.200 19.700C12.700 20.600 12.200 21.600 11.600 22C11.100 22.200 10.500 22.200 10 22C9.500 21.500 9.400 20.500 9 19.700C8.500 18.900 7.400 18.400 6.300 18.400C5.300 18.400 4.600 18.900 4.200 19.700C3.800 20.500 3.600 21.400 3.200 21.900C2.500 22.300 1.500 22.300 0.800 22.100Z" fill="#a9b4bc"/><path d="M5 8.100C6 10.500 7.200 11.800 8.700 11.800C10.500 11.800 12.500 10.500 14 9.200" fill="none" stroke="#fff" stroke-opacity=".8" stroke-width="1.300"/><circle cx="20.100" cy="9.200" r=".9" fill="#fff" fill-opacity=".8"/></g><path d="M278 1071h11v14h-11v13h-9v-18h9z" fill="#a6b1b9"/><path d="M269 1078l7-7v7z" fill="#a6b1b9" opacity=".6"/><rect x="279" y="1089" width="4" height="10" fill="#f26522"/><rect x="285" y="1084" width="4" height="15" fill="#e8a33d"/><rect x="291" y="1087" width="4" height="12" fill="#62b543"/><rect x="267" y="1126" width="24" height="20" fill="#a6b1b9"/><path d="M273 1131l6 5-6 5" fill="none" stroke="#fff" stroke-width="2.600"/></svg>
<!-- tree scrollbars -->
<div class="abs" style="left:997px;top:587px;width:20px;height:413px;background:rgba(0,0,0,.10)"></div>
<div class="abs" style="left:989px;top:688px;width:28px;height:2px;background:#d35b5b"></div>
<div class="abs" style="left:201px;top:1141px;width:652px;height:20px;background:rgba(222,222,222,.88)"></div>
<!-- editor tabs -->
<div class="abs" style="left:1017px;top:240px;width:2773px;height:54px;background:#f2f2f2;border-bottom:2px solid #d1d1d1"></div>
<div class="vl" style="left:1016px;top:240px;height:921px;background:#d6d6d6;width:1.500px"></div>
<div class="abs" style="left:1018px;top:240px;width:299px;height:52px;background:#fff;border-bottom:5px solid #9ca6ba"></div>
<div class="abs nw" style="left:0;top:240px;height:52px;line-height:54px;font-size:29.33px">
<span class="abs sq" style="left:1071px">MainActivity.kt</span>
<span class="abs" style="left:1368px">build.gradle (SystemFramework)</span>
<span class="abs" style="left:1907px">activity_main.xml</span>
<span class="abs" style="left:2243px">build.gradle (:app)</span>
</div>
<svg style="left:1017px;top:240px" width="1600" height="52" viewBox="1017 240 1600 52">
<g fill="none" stroke="#b0b0b0" stroke-width="2"><path d="M1286 259l12 12M1298 259l-12 12M1825 259l12 12M1837 259l-12 12M2161 259l12 12M2173 259l-12 12M2506 259l12 12M2518 259l-12 12"/></g>
<g><circle cx="1050" cy="264" r="12.500" fill="#6ec1de"/><path d="M1054 259a6.500 6.500 0 1 0 0 10" fill="none" stroke="#3b4a52" stroke-width="2.400"/><rect x="1051" y="266" width="14" height="14" fill="#fff"/><path d="M1052.500 267.500h12l-6 6 6 6h-12z" fill="#f88909"/><path d="M1052.500 267.500h6l-6 6z" fill="#d6479b"/><path d="M1052.500 279.500l6-6 6 6z" fill="#0d91e1"/></g>
<g transform="translate(1331.9 257)"><path d="M0.200 21.600C0.400 17 1 14 1.800 11.800C2.800 9.500 4 8 5 7C5.400 6 5.800 5.300 6.300 4.900C8 3.900 10.500 3.600 12.900 3.600C15 3.600 16.800 4.200 18.200 4.900C20 5.800 21.800 7.300 23.500 7C25.200 6.700 26.600 6.200 27 5.200C27.400 4.200 27.500 3.400 27.200 2.800C26.800 2 25.800 1.500 24.800 1.500C23.800 1.500 22.800 1.800 21.900 2.200L22.200 0.400C23 0.100 24 0 24.800 0C26.500 0 28 0.800 28.800 1.800C29.600 2.800 30.100 3.800 30.100 4.900C30.100 6.500 29.600 8 28.800 9.200C27.800 10.600 26.200 11.600 24.800 12.600C23.600 13.500 22.600 14.500 22.200 15.800C21.900 17 22 18.500 21.900 19.700C21.800 20.500 21.600 21.200 21.100 21.600C20.600 22 19.800 22.200 19.300 22.100C18.700 21.500 18.400 20.500 18 19.700C17.500 18.800 16.600 18.200 15.600 18.200C14.600 18.200 13.700 18.800 13.200 19.700C12.700 20.600 12.200 21.600 11.600 22C11.100 22.200 10.500 22.200 10 22C9.500 21.500 9.400 20.500 9 19.700C8.500 18.900 7.400 18.400 6.300 18.400C5.300 18.400 4.600 18.900 4.200 19.700C3.800 20.500 3.600 21.400 3.200 21.900C2.500 22.300 1.500 22.300 0.800 22.100Z" fill="#a9b4bc"/><path d="M5 8.100C6 10.500 7.200 11.800 8.700 11.800C10.500 11.800 12.500 10.500 14 9.200" fill="none" stroke="#f2f2f2" stroke-opacity=".8" stroke-width="1.300"/><circle cx="20.100" cy="9.200" r=".9" fill="#f2f2f2" fill-opacity=".8"/></g>
<g transform="translate(2205.9 257)"><path d="M0.200 21.600C0.400 17 1 14 1.800 11.800C2.800 9.500 4 8 5 7C5.400 6 5.800 5.300 6.300 4.900C8 3.900 10.500 3.600 12.900 3.600C15 3.600 16.800 4.200 18.200 4.900C20 5.800 21.800 7.300 23.500 7C25.200 6.700 26.600 6.200 27 5.200C27.400 4.200 27.500 3.400 27.200 2.800C26.800 2 25.800 1.500 24.800 1.500C23.800 1.500 22.800 1.800 21.900 2.200L22.200 0.400C23 0.100 24 0 24.800 0C26.500 0 28 0.800 28.800 1.800C29.600 2.800 30.100 3.800 30.100 4.900C30.100 6.500 29.600 8 28.800 9.200C27.800 10.600 26.200 11.600 24.800 12.600C23.600 13.500 22.600 14.500 22.200 15.800C21.900 17 22 18.500 21.900 19.700C21.800 20.500 21.600 21.200 21.100 21.600C20.600 22 19.800 22.200 19.300 22.100C18.700 21.500 18.400 20.500 18 19.700C17.500 18.800 16.600 18.200 15.600 18.200C14.600 18.200 13.700 18.800 13.200 19.700C12.700 20.600 12.200 21.600 11.600 22C11.100 22.200 10.500 22.200 10 22C9.500 21.500 9.400 20.500 9 19.700C8.500 18.900 7.400 18.400 6.300 18.400C5.300 18.400 4.600 18.900 4.200 19.700C3.800 20.500 3.600 21.400 3.200 21.900C2.500 22.300 1.500 22.300 0.800 22.100Z" fill="#a9b4bc"/><path d="M5 8.100C6 10.500 7.200 11.800 8.700 11.800C10.500 11.800 12.500 10.500 14 9.200" fill="none" stroke="#f2f2f2" stroke-opacity=".8" stroke-width="1.300"/><circle cx="20.100" cy="9.200" r=".9" fill="#f2f2f2" fill-opacity=".8"/></g>
<path d="M1885 252h9v12h-18v-4h9z" fill="#a9b4bc"/><path d="M1876 259l7-7v7z" fill="#a9b4bc" opacity=".6"/><rect x="1872" y="266" width="29" height="15" fill="#f0a36c"/><path d="M1881 269l-4 4.500 4 4.500M1892 269l4 4.500-4 4.500" fill="none" stroke="#7a3b12" stroke-width="2"/>
</svg>
<!-- editor -->
<div class="abs" id="editor" style="left:1017px;top:294px;width:2773px;height:867px;background:#e8e8e8;overflow:hidden">
<div class="abs" style="left:0;top:660px;width:2773px;height:33px;background:#f1f1f1"></div>
<div class="abs" style="left:263px;top:660px;width:18px;height:33px;background:#a3cbf3"></div>
<div class="abs" style="left:1198px;top:561px;width:18px;height:33px;background:#a3cbf3"></div>
<div class="abs" style="left:115px;top:0;width:2px;height:812px;background:#f0f0f0"></div>
<div class="abs" style="left:198px;top:33px;width:1px;height:33px;background:#c6c6c6"></div>
<div class="abs" style="left:198px;top:132px;width:1px;height:660px;background:#c6c6c6"></div>
<div class="abs" style="left:266px;top:363px;width:1px;height:66px;background:#c6c6c6"></div>
<div class="abs" style="left:266px;top:594px;width:1px;height:66px;background:#c6c6c6"></div>
<div class="abs" style="left:97px;top:561px;width:1.500px;height:132px;background:#6f8fbf"></div>
<div class="ln" style="left:-17px;top:1px;width:60px">17</div>
<div class="code k" style="left:196px;top:0px">companion object</div>
<div class="code b" style="left:468px;top:0px">{</div>
<div class="ln" style="left:-17px;top:34px;width:60px">18</div>
<div class="code k" style="left:264px;top:33px">private const val</div>
<div class="code g" style="left:570px;top:33px">TAG</div>
<div class="code" style="left:638px;top:33px">=</div>
<div class="code s" style="left:672px;top:33px">&quot;MainActivity&quot;</div>
<div class="ln" style="left:-17px;top:67px;width:60px">19</div>
<div class="code b" style="left:196px;top:66px">}</div>
<div class="ln" style="left:-17px;top:100px;width:60px">20</div>
<div class="code k" style="left:196px;top:99px">override fun</div>
<div class="code f" style="left:417px;top:99px">onCreate</div>
<div class="code b" style="left:553px;top:99px">(</div>
<div class="code p" style="left:570px;top:99px">savedInstanceState</div>
<div class="code" style="left:876px;top:99px">:</div>
<div class="code f" style="left:910px;top:99px">Bundle</div>
<div class="code" style="left:1012px;top:99px">?</div>
<div class="code b" style="left:1029px;top:99px">)</div>
<div class="code b" style="left:1063px;top:99px">{</div>
<div class="ln" style="left:-17px;top:133px;width:60px">21</div>
<div class="code k" style="left:264px;top:132px">super</div>
<div class="code" style="left:349px;top:132px">.</div>
<div class="code f" style="left:366px;top:132px">onCreate</div>
<div class="code b" style="left:502px;top:132px">(</div>
<div class="code p" style="left:519px;top:132px">savedInstanceState</div>
<div class="code b" style="left:825px;top:132px">)</div>
<div class="ln" style="left:-17px;top:166px;width:60px">22</div>
<div class="code f" style="left:264px;top:165px">setContentView</div>
<div class="code b" style="left:502px;top:165px">(</div>
<div class="code f" style="left:519px;top:165px">R</div>
<div class="code" style="left:536px;top:165px">.</div>
<div class="code f" style="left:553px;top:165px">layout</div>
<div class="code" style="left:655px;top:165px">.</div>
<div class="code n" style="left:672px;top:165px">activity_main</div>
<div class="code b" style="left:893px;top:165px">)</div>
<div class="ln" style="left:-17px;top:199px;width:60px">23</div>
<div class="ln" style="left:-17px;top:232px;width:60px">24</div>
<div class="ln" style="left:-17px;top:265px;width:60px">25</div>
<div class="ln" style="left:-17px;top:298px;width:60px">26</div>
<div class="ln" style="left:-17px;top:331px;width:60px">27</div>
<div class="code f" style="left:264px;top:330px">findViewById</div>
<div class="code" style="left:468px;top:330px">&lt;</div>
<div class="code f" style="left:485px;top:330px">Button</div>
<div class="code" style="left:587px;top:330px">&gt;</div>
<div class="code b" style="left:604px;top:330px">(</div>
<div class="code f" style="left:621px;top:330px">R</div>
<div class="code" style="left:638px;top:330px">.</div>
<div class="code f" style="left:655px;top:330px">id</div>
<div class="code" style="left:689px;top:330px">.</div>
<div class="code n" style="left:706px;top:330px">btnOpen</div>
<div class="code b" style="left:825px;top:330px">)</div>
<div class="code f" style="left:842px;top:330px">.setOnClickListener</div>
<div class="code bb" style="left:1182px;top:330px">{</div>
<div class="ln" style="left:-17px;top:364px;width:60px">28</div>
<div class="code k" style="left:332px;top:363px">val</div>
<div class="code v" style="left:400px;top:363px">manager</div>
<div class="code" style="left:536px;top:363px">=</div>
<div class="code f" style="left:570px;top:363px">getSystemService</div>
<div class="code b" style="left:842px;top:363px">(</div>
<div class="code f" style="left:859px;top:363px">Context</div>
<div class="code" style="left:978px;top:363px">.</div>
<div class="code e" style="left:995px;top:363px">LED_SERVICE</div>
<div class="code b" style="left:1182px;top:363px">)</div>
<div class="code k" style="left:1216px;top:363px">as?</div>
<div class="code f" style="left:1284px;top:363px">LedManager</div>
<div class="ln" style="left:-17px;top:397px;width:60px">29</div>
<div class="code v" style="left:332px;top:396px">manager</div>
<div class="code" style="left:451px;top:396px">?.</div>
<div class="code f" style="left:485px;top:396px">openLed</div>
<div class="code b" style="left:604px;top:396px">()</div>
<div class="ln" style="left:-17px;top:430px;width:60px">30</div>
<div class="code bb" style="left:264px;top:429px">}</div>
<div class="ln" style="left:-17px;top:463px;width:60px">31</div>
<div class="ln" style="left:-17px;top:496px;width:60px">32</div>
<div class="ln" style="left:-17px;top:529px;width:60px">33</div>
<div class="ln" style="left:-17px;top:562px;width:60px">34</div>
<div class="code f" style="left:264px;top:561px">findViewById</div>
<div class="code" style="left:468px;top:561px">&lt;</div>
<div class="code f" style="left:485px;top:561px">Button</div>
<div class="code" style="left:587px;top:561px">&gt;</div>
<div class="code b" style="left:604px;top:561px">(</div>
<div class="code f" style="left:621px;top:561px">R</div>
<div class="code" style="left:638px;top:561px">.</div>
<div class="code f" style="left:655px;top:561px">id</div>
<div class="code" style="left:689px;top:561px">.</div>
<div class="code n" style="left:706px;top:561px">btnClose</div>
<div class="code b" style="left:842px;top:561px">)</div>
<div class="code f" style="left:859px;top:561px">.setOnClickListener</div>
<div class="code bb" style="left:1199px;top:561px">{</div>
<div class="ln" style="left:-17px;top:595px;width:60px">35</div>
<div class="code k" style="left:332px;top:594px">val</div>
<div class="code v" style="left:400px;top:594px">manager</div>
<div class="code" style="left:536px;top:594px">=</div>
<div class="code f" style="left:570px;top:594px">getSystemService</div>
<div class="code b" style="left:842px;top:594px">(</div>
<div class="code f" style="left:859px;top:594px">Context</div>
<div class="code" style="left:978px;top:594px">.</div>
<div class="code e" style="left:995px;top:594px">LED_SERVICE</div>
<div class="code b" style="left:1182px;top:594px">)</div>
<div class="code k" style="left:1216px;top:594px">as?</div>
<div class="code f" style="left:1284px;top:594px">LedManager</div>
<div class="ln" style="left:-17px;top:628px;width:60px">36</div>
<div class="code v" style="left:332px;top:627px">manager</div>
<div class="code" style="left:451px;top:627px">?.</div>
<div class="code f" style="left:485px;top:627px">closeLed</div>
<div class="code b" style="left:621px;top:627px">()</div>
<div class="ln" style="left:-17px;top:661px;width:60px">37</div>
<div class="code bb" style="left:264px;top:660px">}</div>
<div class="ln" style="left:-17px;top:694px;width:60px">38</div>
<div class="ln" style="left:-17px;top:727px;width:60px">39</div>
<div class="ln" style="left:-17px;top:760px;width:60px">40</div>
<div class="ln" style="left:-17px;top:793px;width:60px">41</div>
<div class="code b" style="left:196px;top:792px">}</div>
<div class="abs hint nw" style="left:1197px;top:331px;height:31px;line-height:30px">it: View!</div>
<div class="abs hint nw" style="left:1214px;top:562px;height:31px;line-height:30px">it: View!</div>
<svg style="left:0;top:0" width="200" height="812"><path d="M108 6h16v13l-8 8-8-8z" fill="#e8e8e8" stroke="#f3f3f3" stroke-width="2"/><path d="M112 16h8" stroke="#f3f3f3" stroke-width="2"/><path d="M108 92h16v-13l-8-8-8 8z" fill="#e8e8e8" stroke="#f3f3f3" stroke-width="2"/><path d="M112 84h8" stroke="#f3f3f3" stroke-width="2"/><path d="M108 105h16v13l-8 8-8-8z" fill="#e8e8e8" stroke="#f3f3f3" stroke-width="2"/><path d="M112 115h8" stroke="#f3f3f3" stroke-width="2"/><path d="M108 336h16v13l-8 8-8-8z" fill="#e8e8e8" stroke="#f3f3f3" stroke-width="2"/><path d="M112 346h8" stroke="#f3f3f3" stroke-width="2"/><path d="M108 455h16v-13l-8-8-8 8z" fill="#e8e8e8" stroke="#f3f3f3" stroke-width="2"/><path d="M112 447h8" stroke="#f3f3f3" stroke-width="2"/><path d="M108 567h16v13l-8 8-8-8z" fill="#e8e8e8" stroke="#f3f3f3" stroke-width="2"/><path d="M112 577h8" stroke="#f3f3f3" stroke-width="2"/><path d="M108 686h16v-13l-8-8-8 8z" fill="#e8e8e8" stroke="#f3f3f3" stroke-width="2"/><path d="M112 678h8" stroke="#f3f3f3" stroke-width="2"/><path d="M108 818h16v-13l-8-8-8 8z" fill="#e8e8e8" stroke="#f3f3f3" stroke-width="2"/><path d="M112 810h8" stroke="#f3f3f3" stroke-width="2"/><circle cx="71" cy="115" r="8" fill="#6bb7d8"/><circle cx="71" cy="115" r="3.200" fill="none" stroke="#3f4d55" stroke-width="2"/><path d="M83 125v-20M78 110l5-6 5 6" fill="none" stroke="#e0393e" stroke-width="2"/></svg>
<div class="abs" style="left:0;top:811px;width:2773px;height:56px;background:#e8e8e8;border-top:2px solid #e1e1e1"></div>
<div class="abs nw" style="left:0;top:813px;height:54px;line-height:54px;font-size:29.33px;color:#626262"><span class="abs" style="left:136px">MainActivity</span><span class="abs" style="left:351px">onCreate()</span><span class="abs" style="left:545px">….setOnClickListener{…}</span></div>
<svg style="left:0;top:811px" width="600" height="56" viewBox="0 0 600 56"><path d="M325 20l8 8.500-8 8.500M518 20l8 8.500-8 8.500" fill="none" stroke="#6e6e6e" stroke-width="1.800"/></svg>
<div class="abs" style="left:2752px;top:155px;width:21px;height:503px;background:#cfcfcf"></div>
<div class="abs" style="left:2744px;top:73px;width:29px;height:4px;background:#e6c317"></div>
<div class="abs" style="left:2744px;top:175px;width:29px;height:4px;background:#dbb91b"></div>
<div class="abs" style="left:2744px;top:380px;width:29px;height:4px;background:#cd5f5f"></div>
<div class="abs" style="left:2744px;top:523px;width:29px;height:4px;background:#cd5f5f"></div>
<svg style="left:2748px;top:4px" width="21" height="21" viewBox="0 0 21 21"><circle cx="10.500" cy="10.500" r="10" fill="#d35b5b"/><rect x="9" y="4.500" width="3.200" height="8" fill="#fff"/><rect x="9" y="14" width="3.200" height="3.200" fill="#fff"/></svg>
</div>
<!-- emulator window -->
<div class="abs" style="left:2629px;top:247px;width:481px;height:875px;border-radius:20px 20px 0 0;box-shadow:0 6px 22px 4px rgba(0,0,0,.38),0 0 0 1.500px rgba(80,80,80,.55);background:#fff;overflow:hidden">
  <div class="abs" style="left:0;top:0;width:481px;height:75px;background:#312f30;border-bottom:2px solid #1f1e1f"></div>
  <div class="abs nw" style="left:12px;top:0;height:74px;line-height:74px;color:#fff;font-weight:bold;font-size:28.4px">Android Emulator - &lt;build&gt;:5554</div>
  <div class="abs" style="left:0;top:75px;width:481px;height:36px;background:#3700b3"></div>
  <div class="abs nw" style="left:11px;top:75px;height:36px;line-height:35px;color:#fff;font-size:20.500px;font-weight:bold;font-family:'Liberation Sans','Noto Sans CJK SC',sans-serif">7:06</div>
  <div class="abs nw" style="left:1px;top:109px;height:36px;line-height:36px;color:#757575;font-size:20.500px;font-family:'Liberation Sans','Noto Sans CJK SC',sans-serif">Hello World!</div>
  <div class="abs" style="left:6px;top:148.500px;width:121px;height:54px;background:#d6d7d7;border-radius:3px;box-shadow:0 1px 2px rgba(0,0,0,.25);text-align:center;line-height:55px;font-size:19px;color:#111;font-family:'Liberation Sans','Noto Sans CJK SC',sans-serif;-webkit-text-stroke:.35px #111">OPEN</div>
  <div class="abs" style="left:6px;top:250.500px;width:121px;height:54px;background:#d6d7d7;border-radius:3px;box-shadow:0 1px 2px rgba(0,0,0,.25);text-align:center;line-height:55px;font-size:19px;color:#111;font-family:'Liberation Sans','Noto Sans CJK SC',sans-serif;-webkit-text-stroke:.35px #111">CLOSE</div>
  <div class="abs" style="left:0;top:803px;width:481px;height:72px;background:#000"></div>
  <svg style="left:0;top:75px" width="481" height="800" viewBox="0 0 481 800">
    <path d="M70 12c8-5 16-5 24 0L82 27z" fill="#7a4fd0"/><text x="86" y="28" font-family="Liberation Sans,sans-serif" font-weight="bold" font-size="11" fill="#d9ccf5">?</text>
    <path d="M400 12c8-5 16-5 24 0l-12 15z" fill="#7a4fd0"/><path d="M415 20l6 6M421 20l-6 6" stroke="#fff" stroke-width="1.800"/>
    <path d="M445 8v19h-19z" fill="#7a4fd0"/><path d="M445 8v19h-19z" fill="none" stroke="#fff" stroke-width="2"/><path d="M445 16v11h-11z" fill="#fff"/>
    <rect x="456" y="9" width="12" height="18" rx="1.500" fill="#fff"/><rect x="459" y="6.500" width="6" height="3" fill="#fff"/>
    <path d="M127 753l-17 11 17 11z" fill="#9e9e9e" stroke="#9e9e9e" stroke-width="2" stroke-linejoin="round"/><circle cx="240" cy="764" r="10.500" fill="#9e9e9e"/><rect x="349" y="753" width="22" height="22" rx="2" fill="#9e9e9e"/>
  </svg>
</div>
<!-- emulator side toolbar -->
<div class="abs" style="left:3109px;top:322px;width:73px;height:580px;background:#f0f0f0;border:2px solid #111;border-left:1px solid #333;box-shadow:3px 4px 10px rgba(0,0,0,.28)"></div>
<svg style="left:3109px;top:322px" width="73" height="580" viewBox="0 0 73 580">
<g fill="none" stroke="#5f7d8c" stroke-width="2.200" stroke-linecap="round">
<path d="M17 16.500h6"/><path d="M48.500 13l7 7M55.500 13l-7 7" stroke-width="1.800"/>
<path d="M30 47a8.500 8.500 0 1 0 11 0M35.500 43v9"/>
<path d="M42 93a6 6 0 0 1 0 10M44.500 89a11 11 0 0 1 0 18" stroke-width="2"/>
<path d="M42 140a4.500 4.500 0 0 1 0 8" stroke-width="2"/>
<rect x="28" y="184" width="15" height="15" transform="rotate(-40 35.500 191.5)"/><path d="M37 178a12 12 0 0 1 10 8"/>
<rect x="28" y="230" width="15" height="15" transform="rotate(40 35.500 237.5)"/><path d="M34 224a12 12 0 0 0-10 8"/>
<circle cx="34" cy="326" r="6.500"/><path d="M39 331l6 6" stroke-width="2.600"/><path d="M31 326h6M34 323v6" stroke-width="1.400"/>
<path d="M41 367v14l-12-7z" stroke-linejoin="round"/>
<circle cx="35.500" cy="420" r="7"/>
<rect x="29" y="459.5" width="13" height="13" rx="1"/>
</g>
<g fill="#5f7d8c"><path d="M26 94h5l7-6v20l-7-6h-5z"/><path d="M28 141h4l6-5v16l-6-5h-4z"/>
<path d="M25 277a2 2 0 0 1 2-2h3l2-3h7l2 3h3a2 2 0 0 1 2 2v11a2 2 0 0 1-2 2H27a2 2 0 0 1-2-2z"/><circle cx="29" cy="512" r="2.200"/><circle cx="35.500" cy="512" r="2.200"/><circle cx="42" cy="512" r="2.200"/></g>
<circle cx="35.500" cy="283" r="4" fill="none" stroke="#f0f0f0" stroke-width="2"/>
</svg>
<!-- logcat panel -->
<div class="abs" style="left:194px;top:1161px;width:3596px;height:1147px;background:#f2f2f2"></div>
<div class="hl" style="left:194px;top:1160px;width:3596px;background:#dadada"></div>
<div class="hl" style="left:194px;top:1215px;width:3596px;background:#d6d6d6"></div>
<div class="abs" style="left:252px;top:1355px;width:3538px;height:953px;background:#e8e8e8"></div>
<div class="hl" style="left:197px;top:1353px;width:3593px;background:#c9c9c9;height:2.500px"></div>
<div class="abs" style="left:194px;top:1300px;width:3px;height:1008px;background:#cdcdcd"></div>
<div class="abs nw" style="left:203px;top:1163px;height:52px;line-height:54px;font-size:29.33px">Logcat</div>
<!-- combos -->
<div class="combo" style="left:207px;top:1229px;width:542px;height:58px"></div>
<div class="combo" style="left:768px;top:1229px;width:542px;height:58px"></div>
<div class="combo" style="left:1335px;top:1229px;width:197px;height:58px"></div>
<div class="combo" style="left:1550px;top:1229px;width:1515px;height:58px"></div>
<div class="combo" style="left:3234px;top:1229px;width:543px;height:58px"></div>
<div class="abs nw" style="left:0;top:1229px;height:58px;line-height:58px;font-size:29.33px">
<span class="abs" style="left:257px">Emulator &lt;build&gt; <span style="color:#8a8a8a">Android 10, API</span></span>
<span class="abs" style="left:781px">com.melrose1994.<b>systemframewo</b></span>
<span class="abs" style="left:1347px">Verbose</span>
<span class="abs" style="left:1610px">Mel</span>
<span class="abs" style="left:3125px">Regex</span>
<span class="abs" style="left:3248px">No Filters</span>
</div>
<div class="abs nw" style="left:252px;top:1305px;height:50px;line-height:50px;font-size:25.2px">logcat</div>
<svg style="left:194px;top:1161px" width="3596px" height="1147" viewBox="194 1161 3596 1147">
<path d="M718 1253h18l-9 10zM1279 1253h18l-9 10zM1500 1253h18l-9 10zM3745 1253h18l-9 10z" fill="#6e6e6e"/>
<!-- device icon -->
<rect x="228.500" y="1247.500" width="13" height="21" rx="2" fill="none" stroke="#9aa7b0" stroke-width="3"/><rect x="238" y="1262" width="13" height="10" fill="#fff"/><rect x="240.500" y="1263.500" width="9" height="6" fill="none" stroke="#834ab5" stroke-width="2"/><path d="M239 1273h12" stroke="#834ab5" stroke-width="2"/>
<!-- search icon -->
<circle cx="1571" cy="1255" r="7.500" fill="none" stroke="#7f7f7f" stroke-width="2"/><path d="M1576.500 1260.500l7 7" stroke="#7f7f7f" stroke-width="2.200"/><path d="M1585 1256h9l-4.500 5z" fill="#7f7f7f"/>
<path d="M3031 1250l14 14M3045 1250l-14 14" stroke="#b0b0b0" stroke-width="2"/>
<!-- checkbox -->
<rect x="3084" y="1243" width="28" height="28" rx="4" fill="#4a9be0" stroke="#3d82c4" stroke-width="1"/><path d="M3090.500 1257l5.500 6 9.500-13" fill="none" stroke="#fff" stroke-width="3.600"/>
<!-- gear & minus -->
<g transform="translate(3711 1189)"><circle r="7.500" fill="none" stroke="#6e6e6e" stroke-width="6"/><g stroke="#6e6e6e" stroke-width="5.500"><path d="M0-13v5M0 13v-5M-13 0h5M13 0h-5M-9.500-9.500l3.500 3.500M9.500 9.500l-3.500-3.500M-9.500 9.500l3.500-3.500M9.500-9.500l-3.500 3.500"/></g></g>
<path d="M3751 1189h24" stroke="#6e6e6e" stroke-width="3"/>
<!-- layout icon -->
<g fill="#6e6e6e"><rect x="3749" y="1317" width="13" height="8"/><rect x="3764" y="1317" width="9" height="8"/><rect x="3749" y="1327" width="24" height="8"/><path d="M3768 1339h11l-5.500 5.500z" fill="#3c3c3c"/></g>
<!-- logcat tab icon -->
<path d="M223 1326h22M223 1332.500h14M223 1339h19" stroke="#6e6e6e" stroke-width="3.200"/>
<!-- side toolbar -->
<rect x="203" y="1416" width="44" height="44" rx="5" fill="#d4d4d4"/>
<g fill="#6e6e6e">
<path d="M216 1377h18v17a3 3 0 0 1-3 3h-12a3 3 0 0 1-3-3z"/><rect x="214" y="1372" width="22" height="3.500"/><rect x="221" y="1369.500" width="8" height="3"/>
<rect x="213" y="1428" width="8" height="3.400"/><rect x="213" y="1436" width="8" height="3.400"/><rect x="213" y="1445" width="25" height="3.400"/><path d="M229.500 1426h3.400v8h5l-6.700 7-6.700-7h5z"/>
<rect x="213" y="1582" width="24" height="3.400"/><rect x="213" y="1591" width="11" height="3.400"/><rect x="213" y="1601" width="4" height="3.400"/>
<path d="M216 1640h18v-5h-18zM213 1642h24a2 2 0 0 1 2 2v9h-5v-5h-18v5h-5v-9a2 2 0 0 1 2-2z"/>
<path d="M218.500 1649.500h13v9h-13z" fill="none" stroke="#6e6e6e" stroke-width="3"/>
<rect x="226" y="1716" width="10" height="10"/>
<g transform="translate(225 1764)"><circle r="7" fill="none" stroke="#6e6e6e" stroke-width="5.600"/><g stroke="#6e6e6e" stroke-width="5"><path d="M0-12.500v5M0 12.500v-5M-12.500 0h5M12.500 0h-5M-9-9l3.500 3.500M9 9l-3.500-3.500M-9 9l3.500-3.500M9-9l-3.500 3.500"/></g></g>
<path d="M211 1823a3 3 0 0 1 3-3h5l2.500-3.500h7l2.500 3.500h5a3 3 0 0 1 3 3v16a3 3 0 0 1-3 3h-22a3 3 0 0 1-3-3z"/>
<rect x="211" y="1873" width="20" height="19" rx="3"/><path d="M231 1882l9-7v15z"/>
</g>
<circle cx="225" cy="1831.500" r="5.500" fill="#6e6e6e" stroke="#f2f2f2" stroke-width="3"/>
<path d="M225 1590h8a4.500 4.500 0 0 1 0 11h-9M228 1597l-4.500 4.500 4.500 4.500" fill="none" stroke="#6e6e6e" stroke-width="3"/>
<g fill="none" stroke="#b8b8b8" stroke-width="4"><path d="M225 1502v-22M216 1489l9-9 9 9M225 1530v22M216 1543l9 9 9-9"/></g>
<path d="M228 1705.500a9 9 0 1 0 -4 17" fill="none" stroke="#59a869" stroke-width="4.400"/><path d="M227.500 1697.500l12 8-12 8z" fill="#59a869"/>
<path d="M206 1678h37M206 1796h37M206 1914h37M206 1980h37" stroke="#d1d1d1" stroke-width="2"/>
<rect x="215" y="1938" width="20" height="20" fill="#db5860"/>
<text x="215" y="2026" font-family="Liberation Sans,sans-serif" font-weight="bold" font-size="31" fill="#6e6e6e">?</text>
</svg>
<div class="abs mono" style="left:273px;top:1356px;font-size:28px;letter-spacing:.143px;line-height:33px;white-space:pre;color:#111">2021-04-07 19:05:41.237 1539-1539/? I/Melrose: led on
2021-04-07 19:06:21.328 1539-1539/? I/Melrose: led off
2021-04-07 19:06:29.595 1539-1539/? I/Melrose: led on</div>
<!-- bottom tool strip -->
<div class="abs" style="left:143px;top:2308px;width:3697px;height:52px;background:#f2f2f2;border-top:2px solid #d1d1d1"></div>
<div class="abs" style="left:1403px;top:2310px;width:179px;height:48px;background:#bdbdbd"></div>
<div class="abs nw" style="left:0;top:2310px;height:50px;line-height:48px;font-size:25.2px">
<span class="abs" style="left:246px">TODO</span>
<span class="abs" style="left:388px">Terminal</span>
<span class="abs" style="left:571px">Database Inspector</span>
<span class="abs" style="left:873px"><u class="m">4</u>: Run</span>
<span class="abs" style="left:1017px"><u class="m">3</u>: Find</span>
<span class="abs" style="left:1167px">Profiler</span>
<span class="abs" style="left:1324px">Build</span>
<span class="abs" style="left:1455px"><u class="m">6</u>: Logcat</span>
<span class="abs" style="left:3375px">Event Log</span>
<span class="abs" style="left:3568px">Layout Inspector</span>
</div>
<svg style="left:143px;top:2308px" width="3697" height="92" viewBox="143 2308 3697 92">
<g fill="#6e6e6e">
<rect x="218" y="2326" width="4" height="3.500"/><rect x="224" y="2326" width="15" height="3.500"/><rect x="218" y="2333" width="4" height="3.500"/><rect x="224" y="2333" width="15" height="3.500"/><rect x="218" y="2340" width="4" height="3.500"/><rect x="224" y="2340" width="15" height="3.500"/>
<rect x="359" y="2324" width="22" height="20"/>
<ellipse cx="553" cy="2327" rx="11" ry="4.500"/><path d="M542 2330c3 4 19 4 22 0v4c-3 4-19 4-22 0zM542 2337c3 4 19 4 22 0v4c-3 4-19 4-22 0zM542 2344c3 4 19 4 22 0v3c-3 4-19 4-22 0z"/>
<path d="M848 2324l16 10-16 10z"/>
<path d="M1296 2328l8-6 6 4-3 3 12 11-4 4-12-12-3 2z"/>
<rect x="1427" y="2328" width="22" height="3.400"/><rect x="1427" y="2335" width="13" height="3.400"/><rect x="1427" y="2342" width="18" height="3.400"/>
</g>
<path d="M363 2329l5 4-5 4M370 2339h7" fill="none" stroke="#f2f2f2" stroke-width="2"/>
<circle cx="867" cy="2343" r="4.500" fill="#00d300"/>
<circle cx="997" cy="2332" r="7.500" fill="none" stroke="#6e6e6e" stroke-width="3.600"/><path d="M1002 2338l8 8" stroke="#6e6e6e" stroke-width="4"/>
<path d="M1140 2343a10.500 10.500 0 0 1 15-9" fill="none" stroke="#6e6e6e" stroke-width="4.500"/><path d="M1159 2337a10.500 10.500 0 0 1 2 6" fill="none" stroke="#6e6e6e" stroke-width="4.500"/><path d="M1156 2331l-6 12h-4z" fill="#6e6e6e"/>
<circle cx="3357" cy="2334" r="13" fill="#59a869"/><path d="M3344 2334h13v13h-13z" fill="#59a869"/>
<text x="3351" y="2343" font-family="Liberation Sans,sans-serif" font-weight="bold" font-size="19" fill="#fff">2</text>
<g fill="none" stroke="#6e6e6e" stroke-width="2"><path d="M3538 2334v-10h20M3543 2341v-12h19v6"/><circle cx="3552" cy="2337" r="4.500" stroke-width="2.500"/><path d="M3555.500 2340.500l6 6" stroke-width="3"/></g>
<!-- status bar icons -->
<g fill="none" stroke="#7a7a7a" stroke-width="2"><rect x="158" y="2375" width="17" height="15"/><path d="M162 2371h18v15"/></g>
<g fill="#6e6e6e"><rect x="3658" y="2377" width="17" height="13"/><path d="M3652 2377v-5a5 5 0 0 1 10 0v2" fill="none" stroke="#6e6e6e" stroke-width="2.600"/></g>
<circle cx="3714.500" cy="2380" r="13.500" fill="#f9d648" stroke="#c9a21d" stroke-width="1.500"/><circle cx="3709.500" cy="2376" r="1.800" fill="#5c4a12"/><circle cx="3719.500" cy="2376" r="1.800" fill="#5c4a12"/><path d="M3707.500 2384c4 4.500 10 4.500 14 0" fill="none" stroke="#5c4a12" stroke-width="1.800"/>
<circle cx="3762.500" cy="2380" r="13.500" fill="#f9d648" stroke="#c9a21d" stroke-width="1.500"/><circle cx="3757.500" cy="2376" r="1.800" fill="#5c4a12"/><circle cx="3767.500" cy="2376" r="1.800" fill="#5c4a12"/><path d="M3755.500 2388c4-4.500 10-4.500 14 0" fill="none" stroke="#5c4a12" stroke-width="1.800"/>
<g fill="#6e6e6e"><path d="M3802 2366h16l2 8h-20z"/><rect x="3796" y="2373" width="28" height="3.500" rx="1.500"/><path d="M3801 2378h18v6a9 9 0 0 1-18 0z" fill="#8a8a8a"/></g>
</svg>
<!-- status bar -->
<div class="hl" style="left:143px;top:2359px;width:3697px;background:#d1d1d1"></div>
<div class="abs nw" style="left:0;top:2361px;height:39px;line-height:36px;font-size:29.5px">
<span class="abs" style="left:198px">Success: Operation succeeded (a minute ago)</span>
<span class="abs" style="left:3258px">37:10</span>
<span class="abs" style="left:3355px">LF</span>
<span class="abs" style="left:3411px">UTF-8</span>
<span class="abs" style="left:3514px">4 spaces</span>
</div>
<!-- right strip -->
<div class="abs" style="left:3789px;top:240px;width:51px;height:2068px;background:#f2f2f2;border-left:1.500px solid #cdcdcd"></div>
<div class="vt" style="left:3840px;top:240px;width:200px;transform:rotate(90deg)"><span class="abs" style="left:49px">Gradle</span></div>
<div class="vt" style="left:3840px;top:1800px;width:320px;transform:rotate(90deg)"><span class="abs" style="left:71px">Device File Explorer</span></div>
<div class="vt" style="left:3840px;top:2130px;width:180px;transform:rotate(90deg)"><span class="abs" style="left:51px">Emulator</span></div>
<svg style="left:3790px;top:240px" width="50" height="2068" viewBox="3790 240 50 2068">
<g transform="translate(3801 261.5) scale(0.9)"><path d="M0.200 21.600C0.400 17 1 14 1.800 11.800C2.800 9.500 4 8 5 7C5.400 6 5.800 5.300 6.300 4.900C8 3.900 10.500 3.600 12.900 3.600C15 3.600 16.800 4.200 18.200 4.900C20 5.800 21.800 7.300 23.500 7C25.200 6.700 26.600 6.200 27 5.200C27.400 4.200 27.500 3.400 27.200 2.800C26.800 2 25.800 1.500 24.800 1.500C23.800 1.500 22.800 1.800 21.900 2.200L22.200 0.400C23 0.100 24 0 24.800 0C26.500 0 28 0.800 28.800 1.800C29.600 2.800 30.100 3.800 30.100 4.900C30.100 6.500 29.600 8 28.800 9.200C27.800 10.600 26.200 11.600 24.800 12.600C23.600 13.500 22.600 14.500 22.200 15.800C21.900 17 22 18.500 21.900 19.700C21.800 20.500 21.600 21.200 21.100 21.600C20.600 22 19.800 22.200 19.300 22.100C18.700 21.500 18.400 20.500 18 19.700C17.500 18.800 16.600 18.200 15.600 18.200C14.600 18.200 13.700 18.800 13.200 19.700C12.700 20.600 12.200 21.600 11.600 22C11.100 22.200 10.500 22.200 10 22C9.500 21.500 9.400 20.500 9 19.700C8.500 18.900 7.400 18.400 6.300 18.400C5.300 18.400 4.600 18.900 4.200 19.700C3.800 20.500 3.600 21.400 3.200 21.900C2.500 22.300 1.500 22.300 0.800 22.100Z" fill="#6e6e6e"/><path d="M5 8.100C6 10.500 7.200 11.800 8.700 11.800C10.500 11.800 12.500 10.500 14 9.200" fill="none" stroke="#f2f2f2" stroke-opacity=".8" stroke-width="1.300"/><circle cx="20.100" cy="9.200" r=".9" fill="#f2f2f2" fill-opacity=".8"/></g>
<rect x="3807.500" y="1841.500" width="15" height="22" rx="2" fill="none" stroke="#6e6e6e" stroke-width="3"/><rect x="3812" y="1859" width="6" height="2" fill="#6e6e6e"/>
<rect x="3807.500" y="2153.500" width="13" height="18" rx="2" fill="none" stroke="#6e6e6e" stroke-width="2.600"/><rect x="3816" y="2165" width="12" height="9" fill="#f2f2f2"/><rect x="3818.500" y="2166.500" width="8" height="5" fill="none" stroke="#834ab5" stroke-width="1.800"/><path d="M3817 2174.500h11" stroke="#834ab5" stroke-width="1.800"/>
</svg>
</body>
</html>
